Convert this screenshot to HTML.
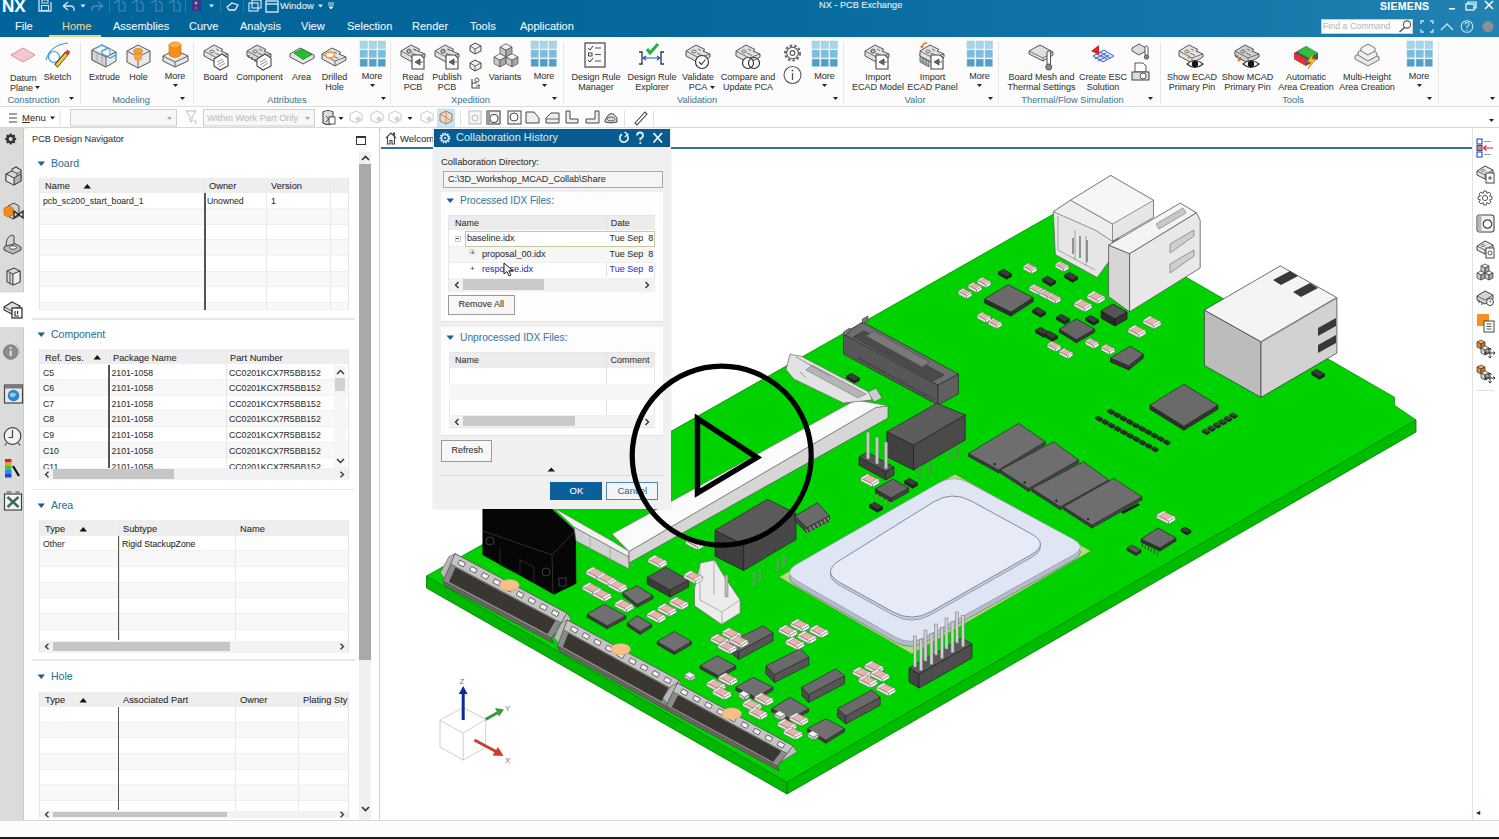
<!DOCTYPE html><html><head><meta charset="utf-8"><style>
*{margin:0;padding:0;box-sizing:border-box}
html,body{width:1499px;height:839px;overflow:hidden;background:#fff;font-family:"Liberation Sans",sans-serif}
.t{position:absolute;white-space:nowrap;line-height:1;-webkit-text-stroke:0.08px currentColor}
.b{position:absolute}
svg{position:absolute;left:0;top:0}
</style></head><body>

<div class="b" style="left:0;top:0;width:1499px;height:37px;background:linear-gradient(90deg,#00649a 0%,#05689b 45%,#1477a9 80%,#2283b3 100%)"></div>
<div class="t" style="left:2px;top:-2px;font-size:17px;color:#fff;font-weight:bold;">NX</div>
<div class="t" style="left:819px;top:0.5px;font-size:9.2px;color:#e8f0f6;font-weight:normal;">NX - PCB Exchange</div>
<div class="t" style="left:1380px;top:1px;font-size:10.5px;color:#fff;font-weight:bold;letter-spacing:0.3px">SIEMENS</div>
<div class="t" style="left:15px;top:21px;font-size:11px;color:#f2f6fa;font-weight:normal;">File</div>
<div class="t" style="left:62px;top:21px;font-size:11px;color:#e8d68a;font-weight:normal;">Home</div>
<div class="t" style="left:113px;top:21px;font-size:11px;color:#f2f6fa;font-weight:normal;">Assemblies</div>
<div class="t" style="left:189px;top:21px;font-size:11px;color:#f2f6fa;font-weight:normal;">Curve</div>
<div class="t" style="left:240px;top:21px;font-size:11px;color:#f2f6fa;font-weight:normal;">Analysis</div>
<div class="t" style="left:301px;top:21px;font-size:11px;color:#f2f6fa;font-weight:normal;">View</div>
<div class="t" style="left:347px;top:21px;font-size:11px;color:#f2f6fa;font-weight:normal;">Selection</div>
<div class="t" style="left:412px;top:21px;font-size:11px;color:#f2f6fa;font-weight:normal;">Render</div>
<div class="t" style="left:470px;top:21px;font-size:11px;color:#f2f6fa;font-weight:normal;">Tools</div>
<div class="t" style="left:520px;top:21px;font-size:11px;color:#f2f6fa;font-weight:normal;">Application</div>
<div class="b" style="left:49px;top:35px;width:52px;height:2.5px;background:#e9d27a"></div>
<div class="b" style="left:1321px;top:19px;width:92px;height:15px;background:#fff;border:1px solid #ccc"></div>
<div class="t" style="left:1323px;top:21.5px;font-size:8.8px;color:#b8b8b8;font-weight:normal;">Find a Command</div>
<div class="b" style="left:0px;top:37px;width:1499px;height:70px;background:#fcfcfc"></div>
<div class="b" style="left:0px;top:106px;width:1499px;height:1px;background:#dcdcdc"></div>
<div class="b" style="left:0px;top:107px;width:1499px;height:21px;background:#fff"></div>
<div class="b" style="left:0px;top:127px;width:1499px;height:1.5px;background:#d8d8d8"></div>
<svg width="1499" height="110" style="left:0;top:0"><path d="M11 55 L23 48 L35 55 L23 62 Z" fill="#f4c8d2" stroke="#e38aa0" stroke-width="1"/><path d="M46 60 Q50 45 68 43" fill="none" stroke="#3a9ad0" stroke-width="1.2"/><circle cx="54" cy="57" r="5.5" fill="none" stroke="#3a9ad0" stroke-width="1.2"/><path d="M56 66 L67 53" stroke="#333" stroke-width="4.5"/><path d="M56.5 65.5 L67 53.5" stroke="#f0c830" stroke-width="3"/><path d="M66 54 L69 51" stroke="#d04040" stroke-width="4"/><g transform="translate(91,43) scale(1.0)"><path d="M1 7 L11 2 L25 9 L25 18 L15 24 L1 17 Z" fill="#e8e8e8" stroke="#5a5a5a" stroke-width="1"/><path d="M1 7 L11 2 L17 5 L11 8 L11 11 L19 15 L25 12 L25 9" fill="#fafafa" stroke="#4aa8d8" stroke-width="1.4"/><path d="M19 6 L25 9 L19 12 Z" fill="#f4f4f4" stroke="#4aa8d8" stroke-width="1"/><path d="M1 7 L1 17 L15 24 L15 14 Z" fill="#d4d4d4" stroke="#5a5a5a" stroke-width="0.9"/><path d="M15 14 L25 9" stroke="#5a5a5a" stroke-width="0.9"/><path d="M6 10 L6 20 M11 12 L11 22" stroke="#9a9a9a" stroke-width="0.7"/></g><g transform="translate(126,43) scale(1.0)"><path d="M1 8 L12 2 L24 8 L24 19 L12 25 L1 19 Z" fill="#e8e8e8" stroke="#555" stroke-width="1"/><path d="M1 8 L12 14 L24 8 M12 14 L12 25" fill="none" stroke="#555" stroke-width="0.9"/><path d="M8 8 L8 16 Q12 20 16 16 L16 8 Z" fill="#f0a050"/><ellipse cx="12" cy="8" rx="4.5" ry="2.5" fill="#f8a030" stroke="#d07010" stroke-width="0.6"/></g><g transform="translate(162,41) scale(1.0)"><path d="M1 15 L13 9 L26 15 L26 20 L13 26 L1 20 Z" fill="#e6e6e6" stroke="#555" stroke-width="1"/><path d="M1 15 L13 21 L26 15 M13 21 L13 26" fill="none" stroke="#555" stroke-width="0.9"/><path d="M7 4 L7 14 Q13 19 19 14 L19 4 Z" fill="#f5901a" stroke="#d07010" stroke-width="0.6"/><ellipse cx="13" cy="4" rx="6" ry="3" fill="#fbb040" stroke="#d07010" stroke-width="0.6"/></g><g transform="translate(203,42) scale(1.0)"><path d="M1 9 L11 3 L20 7.5 L18 9 L25 12 L25 15 L14 21 L1 14 Z" fill="#e4e4e4" stroke="#555" stroke-width="1"/><path d="M1 9 L14 16 L25 12 M14 16 L14 21" fill="none" stroke="#555" stroke-width="0.8"/><ellipse cx="9" cy="9.5" rx="2.2" ry="1.4" fill="none" stroke="#555" stroke-width="0.8"/><path d="M13 7 L16 8.5 M12 11 L17 13.5" stroke="#555" stroke-width="0.8"/><path d="M11 17 L19 12 L25 16 L25 24 L17 28 L11 24 Z" fill="#fff" stroke="#444" stroke-width="1.1"/><path d="M14 20 L20 17 M14 23 L21 19 M16 25 L22 21" stroke="#777" stroke-width="0.8"/></g><g transform="translate(246,42) scale(1.0)"><path d="M1 9 L11 3 L20 7.5 L18 9 L25 12 L25 15 L14 21 L1 14 Z" fill="#d8d8d8" stroke="#555" stroke-width="1"/><path d="M1 9 L14 16 L25 12 M14 16 L14 21" fill="none" stroke="#555" stroke-width="0.8"/><ellipse cx="9" cy="9.5" rx="2.2" ry="1.4" fill="none" stroke="#555" stroke-width="0.8"/><path d="M13 7 L16 8.5 M12 11 L17 13.5" stroke="#555" stroke-width="0.8"/><path d="M3 13 L3 16 M6 15 L6 18 M9 17 L9 20" stroke="#444" stroke-width="1"/><path d="M11 17 L19 12 L25 16 L25 24 L17 28 L11 24 Z" fill="#fff" stroke="#444" stroke-width="1.1"/><path d="M14 20 L20 17 M14 23 L21 19 M16 25 L22 21" stroke="#777" stroke-width="0.8"/></g><g transform="translate(289,45) scale(1.0)"><path d="M1 9 L11 3 L25 10 L25 13 L14 19 L1 12 Z" fill="#e4e4e4" stroke="#555" stroke-width="1"/><path d="M5 8 L13 4 L23 9.5 L14 14.5 Z" fill="#22c030" stroke="#1a8020" stroke-width="0.8"/></g><g transform="translate(321,45) scale(1.0)"><path d="M1 9 L11 3 L20 7.5 L18 9 L25 12 L25 15 L14 21 L1 14 Z" fill="#e4e4e4" stroke="#555" stroke-width="1"/><path d="M1 9 L14 16 L25 12 M14 16 L14 21" fill="none" stroke="#555" stroke-width="0.8"/><ellipse cx="9" cy="9.5" rx="2.2" ry="1.4" fill="none" stroke="#555" stroke-width="0.8"/><path d="M13 7 L16 8.5 M12 11 L17 13.5" stroke="#555" stroke-width="0.8"/><ellipse cx="9" cy="10" rx="4.5" ry="2.8" fill="#fff" stroke="#f0a040" stroke-width="1.8"/></g><g transform="translate(360,41) scale(1.0)"><rect x="0" y="0" width="7.5" height="7.5" fill="#a8d4e8" stroke="#9cc9de" stroke-width="0.5"/><rect x="9" y="0" width="7.5" height="7.5" fill="#a8d4e8" stroke="#9cc9de" stroke-width="0.5"/><rect x="18" y="0" width="7.5" height="7.5" fill="#a8d4e8" stroke="#9cc9de" stroke-width="0.5"/><rect x="0" y="9" width="7.5" height="7.5" fill="#7cbddc" stroke="#9cc9de" stroke-width="0.5"/><rect x="9" y="9" width="7.5" height="7.5" fill="#7cbddc" stroke="#9cc9de" stroke-width="0.5"/><rect x="18" y="9" width="7.5" height="7.5" fill="#7cbddc" stroke="#9cc9de" stroke-width="0.5"/><rect x="0" y="18" width="7.5" height="7.5" fill="#4f9fc9" stroke="#9cc9de" stroke-width="0.5"/><rect x="9" y="18" width="7.5" height="7.5" fill="#4f9fc9" stroke="#9cc9de" stroke-width="0.5"/><rect x="18" y="18" width="7.5" height="7.5" fill="#4f9fc9" stroke="#9cc9de" stroke-width="0.5"/></g><g transform="translate(531,41) scale(1.0)"><rect x="0" y="0" width="7.5" height="7.5" fill="#a8d4e8" stroke="#9cc9de" stroke-width="0.5"/><rect x="9" y="0" width="7.5" height="7.5" fill="#a8d4e8" stroke="#9cc9de" stroke-width="0.5"/><rect x="18" y="0" width="7.5" height="7.5" fill="#a8d4e8" stroke="#9cc9de" stroke-width="0.5"/><rect x="0" y="9" width="7.5" height="7.5" fill="#7cbddc" stroke="#9cc9de" stroke-width="0.5"/><rect x="9" y="9" width="7.5" height="7.5" fill="#7cbddc" stroke="#9cc9de" stroke-width="0.5"/><rect x="18" y="9" width="7.5" height="7.5" fill="#7cbddc" stroke="#9cc9de" stroke-width="0.5"/><rect x="0" y="18" width="7.5" height="7.5" fill="#4f9fc9" stroke="#9cc9de" stroke-width="0.5"/><rect x="9" y="18" width="7.5" height="7.5" fill="#4f9fc9" stroke="#9cc9de" stroke-width="0.5"/><rect x="18" y="18" width="7.5" height="7.5" fill="#4f9fc9" stroke="#9cc9de" stroke-width="0.5"/></g><g transform="translate(812,41) scale(1.0)"><rect x="0" y="0" width="7.5" height="7.5" fill="#a8d4e8" stroke="#9cc9de" stroke-width="0.5"/><rect x="9" y="0" width="7.5" height="7.5" fill="#a8d4e8" stroke="#9cc9de" stroke-width="0.5"/><rect x="18" y="0" width="7.5" height="7.5" fill="#a8d4e8" stroke="#9cc9de" stroke-width="0.5"/><rect x="0" y="9" width="7.5" height="7.5" fill="#7cbddc" stroke="#9cc9de" stroke-width="0.5"/><rect x="9" y="9" width="7.5" height="7.5" fill="#7cbddc" stroke="#9cc9de" stroke-width="0.5"/><rect x="18" y="9" width="7.5" height="7.5" fill="#7cbddc" stroke="#9cc9de" stroke-width="0.5"/><rect x="0" y="18" width="7.5" height="7.5" fill="#4f9fc9" stroke="#9cc9de" stroke-width="0.5"/><rect x="9" y="18" width="7.5" height="7.5" fill="#4f9fc9" stroke="#9cc9de" stroke-width="0.5"/><rect x="18" y="18" width="7.5" height="7.5" fill="#4f9fc9" stroke="#9cc9de" stroke-width="0.5"/></g><g transform="translate(967,41) scale(1.0)"><rect x="0" y="0" width="7.5" height="7.5" fill="#a8d4e8" stroke="#9cc9de" stroke-width="0.5"/><rect x="9" y="0" width="7.5" height="7.5" fill="#a8d4e8" stroke="#9cc9de" stroke-width="0.5"/><rect x="18" y="0" width="7.5" height="7.5" fill="#a8d4e8" stroke="#9cc9de" stroke-width="0.5"/><rect x="0" y="9" width="7.5" height="7.5" fill="#7cbddc" stroke="#9cc9de" stroke-width="0.5"/><rect x="9" y="9" width="7.5" height="7.5" fill="#7cbddc" stroke="#9cc9de" stroke-width="0.5"/><rect x="18" y="9" width="7.5" height="7.5" fill="#7cbddc" stroke="#9cc9de" stroke-width="0.5"/><rect x="0" y="18" width="7.5" height="7.5" fill="#4f9fc9" stroke="#9cc9de" stroke-width="0.5"/><rect x="9" y="18" width="7.5" height="7.5" fill="#4f9fc9" stroke="#9cc9de" stroke-width="0.5"/><rect x="18" y="18" width="7.5" height="7.5" fill="#4f9fc9" stroke="#9cc9de" stroke-width="0.5"/></g><g transform="translate(1407,41) scale(1.0)"><rect x="0" y="0" width="7.5" height="7.5" fill="#a8d4e8" stroke="#9cc9de" stroke-width="0.5"/><rect x="9" y="0" width="7.5" height="7.5" fill="#a8d4e8" stroke="#9cc9de" stroke-width="0.5"/><rect x="18" y="0" width="7.5" height="7.5" fill="#a8d4e8" stroke="#9cc9de" stroke-width="0.5"/><rect x="0" y="9" width="7.5" height="7.5" fill="#7cbddc" stroke="#9cc9de" stroke-width="0.5"/><rect x="9" y="9" width="7.5" height="7.5" fill="#7cbddc" stroke="#9cc9de" stroke-width="0.5"/><rect x="18" y="9" width="7.5" height="7.5" fill="#7cbddc" stroke="#9cc9de" stroke-width="0.5"/><rect x="0" y="18" width="7.5" height="7.5" fill="#4f9fc9" stroke="#9cc9de" stroke-width="0.5"/><rect x="9" y="18" width="7.5" height="7.5" fill="#4f9fc9" stroke="#9cc9de" stroke-width="0.5"/><rect x="18" y="18" width="7.5" height="7.5" fill="#4f9fc9" stroke="#9cc9de" stroke-width="0.5"/></g><g transform="translate(400,42) scale(1.0)"><path d="M1 9 L11 3 L20 7.5 L18 9 L25 12 L25 15 L14 21 L1 14 Z" fill="#e0e0e0" stroke="#555" stroke-width="1"/><path d="M1 9 L14 16 L25 12 M14 16 L14 21" fill="none" stroke="#555" stroke-width="0.8"/><ellipse cx="9" cy="9.5" rx="2.2" ry="1.4" fill="none" stroke="#555" stroke-width="0.8"/><path d="M13 7 L16 8.5 M12 11 L17 13.5" stroke="#555" stroke-width="0.8"/><circle cx="9" cy="9" r="2" fill="none" stroke="#555" stroke-width="0.8"/><path d="M14 7 L18 9" stroke="#555" stroke-width="0.8"/><path d="M12 13 L21 13 L24 16 L24 27 L12 27 Z" fill="#fff" stroke="#444" stroke-width="1.1"/><path d="M15 20 L20 17 L20 23 Z M20 20 L23 20" fill="#666" stroke="#444" stroke-width="0.8"/></g><g transform="translate(434,42) scale(1.0)"><path d="M1 9 L11 3 L20 7.5 L18 9 L25 12 L25 15 L14 21 L1 14 Z" fill="#e0e0e0" stroke="#555" stroke-width="1"/><path d="M1 9 L14 16 L25 12 M14 16 L14 21" fill="none" stroke="#555" stroke-width="0.8"/><ellipse cx="9" cy="9.5" rx="2.2" ry="1.4" fill="none" stroke="#555" stroke-width="0.8"/><path d="M13 7 L16 8.5 M12 11 L17 13.5" stroke="#555" stroke-width="0.8"/><circle cx="9" cy="9" r="2" fill="none" stroke="#555" stroke-width="0.8"/><path d="M14 7 L18 9" stroke="#555" stroke-width="0.8"/><path d="M12 13 L21 13 L24 16 L24 27 L12 27 Z" fill="#fff" stroke="#444" stroke-width="1.1"/><path d="M15 20 L20 17 L20 23 Z M20 20 L23 20" fill="#666" stroke="#444" stroke-width="0.8"/></g><g transform="translate(468,42) scale(1.0)"><path d="M2 4 L7 1 L13 4 L13 9 L7 12 L2 9 Z" fill="#eee" stroke="#444" stroke-width="1"/><path d="M2 4 L7 7 L13 4 M7 7 L7 12" fill="none" stroke="#444" stroke-width="0.8"/></g><g transform="translate(468,59) scale(1.0)"><path d="M2 4 L7 1 L13 4 L13 9 L7 12 L2 9 Z" fill="#eee" stroke="#444" stroke-width="1"/><path d="M2 4 L7 7 L13 4 M7 7 L7 12" fill="none" stroke="#444" stroke-width="0.8"/></g><g transform="translate(468,77) scale(1.0)"><path d="M4 2 L4 11 L12 11 M4 6 L9 6" fill="none" stroke="#444" stroke-width="1.1"/><circle cx="9" cy="3" r="2" fill="none" stroke="#444" stroke-width="0.9"/><path d="M8 9 L12 9 L10 7" fill="none" stroke="#444" stroke-width="0.9"/></g><path d="M500 47 L506 43.7 L512 47 L506 50.3 Z" fill="#f2f2f2" stroke="#555" stroke-width="0.8"/><path d="M500 47 L500 53.6 L506 56.9 L506 50.3 Z" fill="#c8c8c8" stroke="#555" stroke-width="0.8"/><path d="M512 47 L512 53.6 L506 56.9 L506 50.3 Z" fill="#a8a8a8" stroke="#555" stroke-width="0.8"/><path d="M494 57 L500 53.7 L506 57 L500 60.3 Z" fill="#f2f2f2" stroke="#555" stroke-width="0.8"/><path d="M494 57 L494 63.6 L500 66.9 L500 60.3 Z" fill="#c8c8c8" stroke="#555" stroke-width="0.8"/><path d="M506 57 L506 63.6 L500 66.9 L500 60.3 Z" fill="#a8a8a8" stroke="#555" stroke-width="0.8"/><path d="M506 57 L512 53.7 L518 57 L512 60.3 Z" fill="#f2f2f2" stroke="#555" stroke-width="0.8"/><path d="M506 57 L506 63.6 L512 66.9 L512 60.3 Z" fill="#c8c8c8" stroke="#555" stroke-width="0.8"/><path d="M518 57 L518 63.6 L512 66.9 L512 60.3 Z" fill="#a8a8a8" stroke="#555" stroke-width="0.8"/><g transform="translate(584,42) scale(1.0)"><rect x="1" y="1" width="20" height="24" fill="#fafafa" stroke="#444" stroke-width="1.2"/><path d="M4 6 L6 8 L9 4 M4 18 L6 20 L9 16" fill="none" stroke="#333" stroke-width="1"/><rect x="4.5" y="11" width="3.5" height="3" fill="none" stroke="#333" stroke-width="0.9"/><path d="M11 6 L17 6 M11 12.5 L17 12.5 M11 19 L17 19" stroke="#555" stroke-width="1"/></g><g transform="translate(638,42) scale(1.0)"><path d="M1 10 L4 10 L4 22 L1 22 M26 10 L23 10 L23 22 L26 22" fill="none" stroke="#333" stroke-width="1.3"/><path d="M5 16 L22 16 M5 16 L8 14 M5 16 L8 18 M22 16 L19 14 M22 16 L19 18" fill="none" stroke="#2050c0" stroke-width="1.1"/><path d="M9 7 L12 11 L20 2" fill="none" stroke="#20b040" stroke-width="3"/></g><g transform="translate(685,42) scale(1.0)"><path d="M1 9 L11 3 L20 7.5 L18 9 L25 12 L25 15 L14 21 L1 14 Z" fill="#e0e0e0" stroke="#555" stroke-width="1"/><path d="M1 9 L14 16 L25 12 M14 16 L14 21" fill="none" stroke="#555" stroke-width="0.8"/><ellipse cx="9" cy="9.5" rx="2.2" ry="1.4" fill="none" stroke="#555" stroke-width="0.8"/><path d="M13 7 L16 8.5 M12 11 L17 13.5" stroke="#555" stroke-width="0.8"/><circle cx="17" cy="20" r="6.5" fill="#fff" stroke="#333" stroke-width="1.2"/><path d="M14 20 L16.5 22.5 L20.5 17.5" fill="none" stroke="#333" stroke-width="1.1"/></g><g transform="translate(735,42) scale(1.0)"><path d="M1 9 L11 3 L20 7.5 L18 9 L25 12 L25 15 L14 21 L1 14 Z" fill="#e0e0e0" stroke="#555" stroke-width="1"/><path d="M1 9 L14 16 L25 12 M14 16 L14 21" fill="none" stroke="#555" stroke-width="0.8"/><ellipse cx="9" cy="9.5" rx="2.2" ry="1.4" fill="none" stroke="#555" stroke-width="0.8"/><path d="M13 7 L16 8.5 M12 11 L17 13.5" stroke="#555" stroke-width="0.8"/><circle cx="13" cy="21" r="5.5" fill="#fff" stroke="#333" stroke-width="1.2"/><circle cx="19" cy="21" r="5.5" fill="none" stroke="#333" stroke-width="1.2"/></g><g transform="translate(792.5,53) scale(1.0)"><circle r="7.5" fill="none" stroke="#666" stroke-width="2" stroke-dasharray="2.6 2"/><circle r="5.8" fill="#fff" stroke="#555" stroke-width="1.1"/><circle r="2.4" fill="none" stroke="#555" stroke-width="1.1"/></g><circle cx="792.5" cy="75" r="8.5" fill="#fff" stroke="#555" stroke-width="1.1"/><path d="M792.5 73 L792.5 80" stroke="#555" stroke-width="1.3"/><circle cx="792.5" cy="70.5" r="0.9" fill="#555"/><g transform="translate(864,42) scale(1.0)"><path d="M1 9 L11 3 L20 7.5 L18 9 L25 12 L25 15 L14 21 L1 14 Z" fill="#e0e0e0" stroke="#555" stroke-width="1"/><path d="M1 9 L14 16 L25 12 M14 16 L14 21" fill="none" stroke="#555" stroke-width="0.8"/><ellipse cx="9" cy="9.5" rx="2.2" ry="1.4" fill="none" stroke="#555" stroke-width="0.8"/><path d="M13 7 L16 8.5 M12 11 L17 13.5" stroke="#555" stroke-width="0.8"/><circle cx="9" cy="9" r="2" fill="none" stroke="#555" stroke-width="0.8"/><path d="M12 13 L21 13 L24 16 L24 27 L12 27 Z" fill="#fff" stroke="#444" stroke-width="1.1"/><path d="M15 20 L20 17 L20 23 Z M20 20 L23 20" fill="#666" stroke="#444" stroke-width="0.8"/></g><g transform="translate(919,42) scale(1.0)"><path d="M1 12 L10 7 L10 25 L1 20 Z" fill="#c8c8c8" stroke="#555" stroke-width="0.8"/><path d="M1 15 L10 20 M1 18 L10 23 M4 10 L4 22 M7 9 L7 24" stroke="#555" stroke-width="0.6"/><path d="M1 9 L11 3 L20 7.5 L18 9 L25 12 L25 15 L14 21 L1 14 Z" fill="#e0e0e0" stroke="#555" stroke-width="1"/><path d="M1 9 L14 16 L25 12 M14 16 L14 21" fill="none" stroke="#555" stroke-width="0.8"/><ellipse cx="9" cy="9.5" rx="2.2" ry="1.4" fill="none" stroke="#555" stroke-width="0.8"/><path d="M13 7 L16 8.5 M12 11 L17 13.5" stroke="#555" stroke-width="0.8"/><path d="M12 13 L21 13 L24 16 L24 27 L12 27 Z" fill="#fff" stroke="#444" stroke-width="1.1"/><path d="M15 20 L20 17 L20 23 Z M20 20 L23 20" fill="#666" stroke="#444" stroke-width="0.8"/><path d="M3 6 Q3 1 8 1" fill="none" stroke="#f07020" stroke-width="1.4"/><path d="M1 4 L3 7 L5 4" fill="#f07020"/></g><g transform="translate(1028,42) scale(1.0)"><path d="M1 9 L12 3 L25 10 L25 13 L15 19 L1 12 Z" fill="#e0e0e0" stroke="#555" stroke-width="1"/><path d="M1 9 L15 16 L25 10 M15 16 L15 19" fill="none" stroke="#555" stroke-width="0.8"/><rect x="19" y="9" width="3.5" height="14" rx="1.7" fill="#fff" stroke="#555" stroke-width="1.1"/><circle cx="20.75" cy="25" r="3" fill="#888" stroke="#555" stroke-width="1"/></g><g transform="translate(1090,42) scale(1.0)"><path d="M3 14 L14 8 L24 14 L13 20 Z M5 17 L16 11 M8 19 L19 13 M7 12 L17 17 M10 10 L20 16" fill="#d8e4f8" stroke="#3050d0" stroke-width="0.9"/><path d="M1 9 L9 3 L9 13 Z" fill="#e02020"/></g><g transform="translate(1131,42) scale(1.0)"><path d="M1 6 L8 2 L15 6 L15 9 L8 13 L1 9 Z" fill="#ddd" stroke="#444" stroke-width="0.9"/><rect x="14" y="4" width="3" height="10" rx="1.5" fill="#fff" stroke="#444" stroke-width="0.9"/><circle cx="15.5" cy="15" r="2.2" fill="#888" stroke="#444" stroke-width="0.8"/></g><g transform="translate(1131,62) scale(1.0)"><path d="M4 1 L12 1 L15 4 L15 10 L4 10 Z" fill="#fff" stroke="#444" stroke-width="0.9"/><rect x="1" y="10" width="17" height="8" fill="#ddd" stroke="#444" stroke-width="1"/><circle cx="12" cy="14" r="3" fill="#fff" stroke="#444" stroke-width="0.9"/></g><g transform="translate(1178,42) scale(1.0)"><path d="M1 9 L11 3 L20 7.5 L18 9 L25 12 L25 15 L14 21 L1 14 Z" fill="#e2e2e2" stroke="#555" stroke-width="1"/><path d="M1 9 L14 16 L25 12 M14 16 L14 21" fill="none" stroke="#555" stroke-width="0.8"/><ellipse cx="9" cy="9.5" rx="2.2" ry="1.4" fill="none" stroke="#555" stroke-width="0.8"/><path d="M13 7 L16 8.5 M12 11 L17 13.5" stroke="#555" stroke-width="0.8"/><circle cx="11" cy="15" r="1.6" fill="#f08030"/><path d="M9 22 Q17 15 25 22 Q17 29 9 22 Z" fill="#fff" stroke="#333" stroke-width="1.2"/><circle cx="17" cy="22" r="3.2" fill="#111"/></g><g transform="translate(1234,42) scale(1.0)"><path d="M1 9 L11 3 L20 7.5 L18 9 L25 12 L25 15 L14 21 L1 14 Z" fill="#cfcfcf" stroke="#555" stroke-width="1"/><path d="M1 9 L14 16 L25 12 M14 16 L14 21" fill="none" stroke="#555" stroke-width="0.8"/><ellipse cx="9" cy="9.5" rx="2.2" ry="1.4" fill="none" stroke="#555" stroke-width="0.8"/><path d="M13 7 L16 8.5 M12 11 L17 13.5" stroke="#555" stroke-width="0.8"/><path d="M3 13 L3 16 M6 15 L6 18" stroke="#444" stroke-width="1"/><circle cx="5" cy="18" r="1.6" fill="#f08030"/><path d="M9 22 Q17 15 25 22 Q17 29 9 22 Z" fill="#fff" stroke="#333" stroke-width="1.2"/><circle cx="17" cy="22" r="3.2" fill="#111"/></g><g transform="translate(1293,42) scale(1.0)"><path d="M1 11 L13 4 L25 11 L25 17 L13 24 L1 17 Z" fill="#555"/><path d="M13 4 L25 11 L16 16 L5 10 Z" fill="#30c040"/><path d="M1 11 L13 17 L13 24 L1 17 Z" fill="#e83030"/><path d="M20 12 L14 20 L18 20 L15 27 L23 17 L19 17 Z" fill="#f8c020" stroke="#c08000" stroke-width="0.6"/></g><g transform="translate(1354,42) scale(1.0)"><path d="M1 14 L12 8 L25 15 L25 18 L14 24 L1 17 Z" fill="#e8e8e8" stroke="#666" stroke-width="0.9"/><path d="M4 10 L13 5 L23 11 L23 14 L14 19 L4 13 Z" fill="#efefef" stroke="#666" stroke-width="0.9"/><path d="M7 6 L14 2 L21 6 L21 9 L14 13 L7 9 Z" fill="#f4f4f4" stroke="#666" stroke-width="0.9"/></g></svg>
<div class="t" style="left:10px;top:74px;font-size:9px;color:#3a3a3a;font-weight:normal;">Datum</div>
<div class="t" style="left:10px;top:84px;font-size:9px;color:#3a3a3a;font-weight:normal;">Plane</div>
<svg style="left:35.0px;top:85.5px" width="5" height="3"><path d="M0 0 L5 0 L2.5 3 Z" fill="#222"/></svg>
<div class="t" style="left:-2.5px;top:72.0px;width:120px;text-align:center;font-size:9px;line-height:10px;color:#3a3a3a">Sketch</div>
<div class="t" style="left:44.5px;top:72.0px;width:120px;text-align:center;font-size:9px;line-height:10px;color:#3a3a3a">Extrude</div>
<div class="t" style="left:78.5px;top:72.0px;width:120px;text-align:center;font-size:9px;line-height:10px;color:#3a3a3a">Hole</div>
<div class="t" style="left:115px;top:71px;width:120px;text-align:center;font-size:9px;line-height:10px;color:#3a3a3a">More</div>
<svg style="left:172.5px;top:83.5px" width="5" height="3"><path d="M0 0 L5 0 L2.5 3 Z" fill="#222"/></svg>
<div class="t" style="left:155.5px;top:72.0px;width:120px;text-align:center;font-size:9px;line-height:10px;color:#3a3a3a">Board</div>
<div class="t" style="left:199.5px;top:72.0px;width:120px;text-align:center;font-size:9px;line-height:10px;color:#3a3a3a">Component</div>
<div class="t" style="left:241.5px;top:72.0px;width:120px;text-align:center;font-size:9px;line-height:10px;color:#3a3a3a">Area</div>
<div class="t" style="left:274.5px;top:72.0px;width:120px;text-align:center;font-size:9px;line-height:10px;color:#3a3a3a">Drilled<br>Hole</div>
<div class="t" style="left:312px;top:71px;width:120px;text-align:center;font-size:9px;line-height:10px;color:#3a3a3a">More</div>
<svg style="left:369.5px;top:83.5px" width="5" height="3"><path d="M0 0 L5 0 L2.5 3 Z" fill="#222"/></svg>
<div class="t" style="left:353px;top:72.0px;width:120px;text-align:center;font-size:9px;line-height:10px;color:#3a3a3a">Read<br>PCB</div>
<div class="t" style="left:387px;top:72.0px;width:120px;text-align:center;font-size:9px;line-height:10px;color:#3a3a3a">Publish<br>PCB</div>
<div class="t" style="left:445px;top:72.0px;width:120px;text-align:center;font-size:9px;line-height:10px;color:#3a3a3a">Variants</div>
<div class="t" style="left:484px;top:71px;width:120px;text-align:center;font-size:9px;line-height:10px;color:#3a3a3a">More</div>
<svg style="left:541.5px;top:83.5px" width="5" height="3"><path d="M0 0 L5 0 L2.5 3 Z" fill="#222"/></svg>
<div class="t" style="left:536px;top:72.0px;width:120px;text-align:center;font-size:9px;line-height:10px;color:#3a3a3a">Design Rule<br>Manager</div>
<div class="t" style="left:592px;top:72.0px;width:120px;text-align:center;font-size:9px;line-height:10px;color:#3a3a3a">Design Rule<br>Explorer</div>
<div class="t" style="left:638px;top:72.0px;width:120px;text-align:center;font-size:9px;line-height:10px;color:#3a3a3a">Validate<br>PCA</div>
<svg style="left:709.5px;top:85.5px" width="5" height="3"><path d="M0 0 L5 0 L2.5 3 Z" fill="#222"/></svg>
<div class="t" style="left:688px;top:72.0px;width:120px;text-align:center;font-size:9px;line-height:10px;color:#3a3a3a">Compare and<br>Update PCA</div>
<div class="t" style="left:764.5px;top:71px;width:120px;text-align:center;font-size:9px;line-height:10px;color:#3a3a3a">More</div>
<svg style="left:822.0px;top:83.5px" width="5" height="3"><path d="M0 0 L5 0 L2.5 3 Z" fill="#222"/></svg>
<div class="t" style="left:818px;top:72.0px;width:120px;text-align:center;font-size:9px;line-height:10px;color:#3a3a3a">Import<br>ECAD Model</div>
<div class="t" style="left:872.5px;top:72.0px;width:120px;text-align:center;font-size:9px;line-height:10px;color:#3a3a3a">Import<br>ECAD Panel</div>
<div class="t" style="left:919.5px;top:71px;width:120px;text-align:center;font-size:9px;line-height:10px;color:#3a3a3a">More</div>
<svg style="left:977.0px;top:83.5px" width="5" height="3"><path d="M0 0 L5 0 L2.5 3 Z" fill="#222"/></svg>
<div class="t" style="left:981.5px;top:72.0px;width:120px;text-align:center;font-size:9px;line-height:10px;color:#3a3a3a">Board Mesh and<br>Thermal Settings</div>
<div class="t" style="left:1043px;top:72.0px;width:120px;text-align:center;font-size:9px;line-height:10px;color:#3a3a3a">Create ESC<br>Solution</div>
<div class="t" style="left:1132px;top:72.0px;width:120px;text-align:center;font-size:9px;line-height:10px;color:#3a3a3a">Show ECAD<br>Primary Pin</div>
<div class="t" style="left:1187.5px;top:72.0px;width:120px;text-align:center;font-size:9px;line-height:10px;color:#3a3a3a">Show MCAD<br>Primary Pin</div>
<div class="t" style="left:1246px;top:72.0px;width:120px;text-align:center;font-size:9px;line-height:10px;color:#3a3a3a">Automatic<br>Area Creation</div>
<div class="t" style="left:1307px;top:72.0px;width:120px;text-align:center;font-size:9px;line-height:10px;color:#3a3a3a">Multi-Height<br>Area Creation</div>
<div class="t" style="left:1359px;top:71px;width:120px;text-align:center;font-size:9px;line-height:10px;color:#3a3a3a">More</div>
<svg style="left:1416.5px;top:83.5px" width="5" height="3"><path d="M0 0 L5 0 L2.5 3 Z" fill="#222"/></svg>
<div class="t" style="left:-26.5px;top:95.3px;width:120px;text-align:center;font-size:9.3px;line-height:10px;color:#477c9a">Construction</div>
<div class="t" style="left:71px;top:95.3px;width:120px;text-align:center;font-size:9.3px;line-height:10px;color:#477c9a">Modeling</div>
<div class="t" style="left:227px;top:95.3px;width:120px;text-align:center;font-size:9.3px;line-height:10px;color:#477c9a">Attributes</div>
<div class="t" style="left:410.5px;top:95.3px;width:120px;text-align:center;font-size:9.3px;line-height:10px;color:#477c9a">Xpedition</div>
<div class="t" style="left:637px;top:95.3px;width:120px;text-align:center;font-size:9.3px;line-height:10px;color:#477c9a">Validation</div>
<div class="t" style="left:855px;top:95.3px;width:120px;text-align:center;font-size:9.3px;line-height:10px;color:#477c9a">Valor</div>
<div class="t" style="left:1012.5px;top:95.3px;width:120px;text-align:center;font-size:9.3px;line-height:10px;color:#477c9a">Thermal/Flow Simulation</div>
<div class="t" style="left:1233px;top:95.3px;width:120px;text-align:center;font-size:9.3px;line-height:10px;color:#477c9a">Tools</div>
<svg style="left:68.5px;top:97.0px" width="5" height="3"><path d="M0 0 L5 0 L2.5 3 Z" fill="#222"/></svg>
<svg style="left:179.5px;top:97.0px" width="5" height="3"><path d="M0 0 L5 0 L2.5 3 Z" fill="#222"/></svg>
<svg style="left:380.5px;top:97.0px" width="5" height="3"><path d="M0 0 L5 0 L2.5 3 Z" fill="#222"/></svg>
<svg style="left:551.5px;top:97.0px" width="5" height="3"><path d="M0 0 L5 0 L2.5 3 Z" fill="#222"/></svg>
<svg style="left:832.5px;top:97.0px" width="5" height="3"><path d="M0 0 L5 0 L2.5 3 Z" fill="#222"/></svg>
<svg style="left:987.5px;top:97.0px" width="5" height="3"><path d="M0 0 L5 0 L2.5 3 Z" fill="#222"/></svg>
<svg style="left:1147.5px;top:97.0px" width="5" height="3"><path d="M0 0 L5 0 L2.5 3 Z" fill="#222"/></svg>
<svg style="left:1426.5px;top:97.0px" width="5" height="3"><path d="M0 0 L5 0 L2.5 3 Z" fill="#222"/></svg>
<svg style="left:1489.5px;top:97.0px" width="5" height="3"><path d="M0 0 L5 0 L2.5 3 Z" fill="#222"/></svg>
<div class="b" style="left:80px;top:42px;width:1px;height:62px;background:#e6e6e6"></div>
<div class="b" style="left:193px;top:42px;width:1px;height:62px;background:#e6e6e6"></div>
<div class="b" style="left:390px;top:42px;width:1px;height:62px;background:#e6e6e6"></div>
<div class="b" style="left:563px;top:42px;width:1px;height:62px;background:#e6e6e6"></div>
<div class="b" style="left:843px;top:42px;width:1px;height:62px;background:#e6e6e6"></div>
<div class="b" style="left:998px;top:42px;width:1px;height:62px;background:#e6e6e6"></div>
<div class="b" style="left:1160px;top:42px;width:1px;height:62px;background:#e6e6e6"></div>
<div class="b" style="left:1438px;top:42px;width:1px;height:62px;background:#e6e6e6"></div>
<div class="b" style="left:0px;top:128px;width:23px;height:693px;background:#dadcda"></div>
<div class="b" style="left:23px;top:128px;width:1.2px;height:693px;background:#c8cac8"></div>
<div class="b" style="left:25px;top:128px;width:354px;height:693px;background:#fff"></div>
<div class="b" style="left:378.6px;top:128px;width:1.5px;height:693px;background:#cfcfcf"></div>
<div class="t" style="left:32px;top:135px;font-size:9.2px;color:#3a3a3a;font-weight:normal;">PCB Design Navigator</div>
<div class="b" style="left:356px;top:136px;width:10px;height:9px;border:1.3px solid #333;border-top-width:2.5px"></div>
<div class="b" style="left:359px;top:152px;width:12px;height:668px;background:#f0f0f0"></div>
<div class="b" style="left:359px;top:164px;width:12px;height:496px;background:#a9a9a9"></div>
<svg style="left:361px;top:155px" width="9" height="6"><path d="M1 5 L4.5 1.5 L8 5" fill="none" stroke="#333" stroke-width="1.6"/></svg>
<svg style="left:360.5px;top:806px" width="9" height="6"><path d="M1 1 L4.5 4.5 L8 1" fill="none" stroke="#333" stroke-width="1.6"/></svg>
<svg style="left:37px;top:160.5px" width="9" height="6"><path d="M0.5 0.5 L8 0.5 L4.25 5 Z" fill="#1f5f8b"/></svg>
<div class="t" style="left:51px;top:157.5px;font-size:10.5px;color:#2d7296;font-weight:normal;">Board</div>
<div class="b" style="left:32px;top:318px;width:323px;height:1.5px;background:#e8e8e8"></div>
<div class="b" style="left:39px;top:177.6px;width:310px;height:132.4px;background:#fff;border:1px solid #e4e4e4"></div>
<div class="b" style="left:40px;top:177.6px;width:308px;height:15.599999999999994px;background:#eeeeee"></div>
<div class="b" style="left:40px;top:207.89999999999998px;width:308px;height:1px;background:#f1f1f1"></div>
<div class="b" style="left:40px;top:208.89999999999998px;width:308px;height:15.7px;background:#f8f8f8"></div>
<div class="b" style="left:40px;top:223.59999999999997px;width:308px;height:1px;background:#f1f1f1"></div>
<div class="b" style="left:40px;top:239.29999999999995px;width:308px;height:1px;background:#f1f1f1"></div>
<div class="b" style="left:40px;top:240.29999999999995px;width:308px;height:15.7px;background:#f8f8f8"></div>
<div class="b" style="left:40px;top:254.99999999999994px;width:308px;height:1px;background:#f1f1f1"></div>
<div class="b" style="left:40px;top:270.69999999999993px;width:308px;height:1px;background:#f1f1f1"></div>
<div class="b" style="left:40px;top:271.69999999999993px;width:308px;height:15.7px;background:#f8f8f8"></div>
<div class="b" style="left:40px;top:286.3999999999999px;width:308px;height:1px;background:#f1f1f1"></div>
<div class="b" style="left:40px;top:302.0999999999999px;width:308px;height:1px;background:#f1f1f1"></div>
<div class="b" style="left:40px;top:303.0999999999999px;width:308px;height:6.900000000000091px;background:#f8f8f8"></div>
<div class="b" style="left:40px;top:309.0px;width:308px;height:1px;background:#f1f1f1"></div>
<div class="b" style="left:204px;top:178.6px;width:1px;height:131.4px;background:#e8e8e8"></div>
<div class="b" style="left:266px;top:178.6px;width:1px;height:131.4px;background:#e8e8e8"></div>
<div class="b" style="left:329.5px;top:178.6px;width:1px;height:131.4px;background:#e8e8e8"></div>
<div class="t" style="left:45px;top:182.2px;font-size:9.3px;color:#2a2a2a;font-weight:normal;">Name</div>
<svg style="left:83px;top:182.89999999999998px" width="9" height="6"><path d="M0.5 5.5 L8 5.5 L4.25 1 Z" fill="#111"/></svg>
<div class="t" style="left:209px;top:182.2px;font-size:9.3px;color:#2a2a2a;font-weight:normal;">Owner</div>
<div class="t" style="left:271px;top:182.2px;font-size:9.3px;color:#2a2a2a;font-weight:normal;">Version</div>
<div class="t" style="left:43px;top:197.24999999999997px;font-size:8.7px;color:#333;font-weight:normal;">pcb_sc200_start_board_1</div>
<div class="t" style="left:207px;top:197.24999999999997px;font-size:8.7px;color:#333;font-weight:normal;">Unowned</div>
<div class="t" style="left:271px;top:197.24999999999997px;font-size:8.7px;color:#2a2a2a;font-weight:normal;">1</div>
<div class="b" style="left:204px;top:193.2px;width:1.8px;height:116.80000000000001px;background:#555"></div>
<svg style="left:37px;top:331.6px" width="9" height="6"><path d="M0.5 0.5 L8 0.5 L4.25 5 Z" fill="#1f5f8b"/></svg>
<div class="t" style="left:51px;top:328.6px;font-size:10.5px;color:#2d7296;font-weight:normal;">Component</div>
<div class="b" style="left:32px;top:488.7px;width:323px;height:1.5px;background:#e8e8e8"></div>
<div class="b" style="left:39px;top:349.3px;width:310px;height:130.7px;background:#fff;border:1px solid #e4e4e4"></div>
<div class="b" style="left:40px;top:349.3px;width:308px;height:15.199999999999989px;background:#eeeeee"></div>
<div class="b" style="left:40px;top:379.1px;width:308px;height:1px;background:#f1f1f1"></div>
<div class="b" style="left:40px;top:380.1px;width:308px;height:15.6px;background:#f8f8f8"></div>
<div class="b" style="left:40px;top:394.70000000000005px;width:308px;height:1px;background:#f1f1f1"></div>
<div class="b" style="left:40px;top:410.30000000000007px;width:308px;height:1px;background:#f1f1f1"></div>
<div class="b" style="left:40px;top:411.30000000000007px;width:308px;height:15.6px;background:#f8f8f8"></div>
<div class="b" style="left:40px;top:425.9000000000001px;width:308px;height:1px;background:#f1f1f1"></div>
<div class="b" style="left:40px;top:441.5000000000001px;width:308px;height:1px;background:#f1f1f1"></div>
<div class="b" style="left:40px;top:442.5000000000001px;width:308px;height:15.6px;background:#f8f8f8"></div>
<div class="b" style="left:40px;top:457.10000000000014px;width:308px;height:1px;background:#f1f1f1"></div>
<div class="b" style="left:40px;top:472.70000000000016px;width:308px;height:1px;background:#f1f1f1"></div>
<div class="b" style="left:40px;top:473.70000000000016px;width:308px;height:6.299999999999841px;background:#f8f8f8"></div>
<div class="b" style="left:40px;top:479.0px;width:308px;height:1px;background:#f1f1f1"></div>
<div class="b" style="left:109px;top:350.3px;width:1px;height:129.7px;background:#e8e8e8"></div>
<div class="b" style="left:225.6px;top:350.3px;width:1px;height:129.7px;background:#e8e8e8"></div>
<div class="t" style="left:45px;top:353.7px;font-size:9.3px;color:#2a2a2a;font-weight:normal;">Ref. Des.</div>
<svg style="left:93px;top:354.4px" width="9" height="6"><path d="M0.5 5.5 L8 5.5 L4.25 1 Z" fill="#111"/></svg>
<div class="t" style="left:113px;top:353.7px;font-size:9.3px;color:#2a2a2a;font-weight:normal;">Package Name</div>
<div class="t" style="left:230px;top:353.7px;font-size:9.3px;color:#2a2a2a;font-weight:normal;">Part Number</div>
<div class="t" style="left:43px;top:368.5px;font-size:8.7px;color:#333;font-weight:normal;">C5</div>
<div class="t" style="left:111.5px;top:368.5px;font-size:8.7px;color:#333;font-weight:normal;">2101-1058</div>
<div class="t" style="left:229px;top:368.5px;font-size:8.7px;color:#333;font-weight:normal;">CC0201KCX7R5BB152</div>
<div class="t" style="left:43px;top:384.1px;font-size:8.7px;color:#333;font-weight:normal;">C6</div>
<div class="t" style="left:111.5px;top:384.1px;font-size:8.7px;color:#333;font-weight:normal;">2101-1058</div>
<div class="t" style="left:229px;top:384.1px;font-size:8.7px;color:#333;font-weight:normal;">CC0201KCX7R5BB152</div>
<div class="t" style="left:43px;top:399.7px;font-size:8.7px;color:#333;font-weight:normal;">C7</div>
<div class="t" style="left:111.5px;top:399.7px;font-size:8.7px;color:#333;font-weight:normal;">2101-1058</div>
<div class="t" style="left:229px;top:399.7px;font-size:8.7px;color:#333;font-weight:normal;">CC0201KCX7R5BB152</div>
<div class="t" style="left:43px;top:415.3px;font-size:8.7px;color:#333;font-weight:normal;">C8</div>
<div class="t" style="left:111.5px;top:415.3px;font-size:8.7px;color:#333;font-weight:normal;">2101-1058</div>
<div class="t" style="left:229px;top:415.3px;font-size:8.7px;color:#333;font-weight:normal;">CC0201KCX7R5BB152</div>
<div class="t" style="left:43px;top:430.9px;font-size:8.7px;color:#333;font-weight:normal;">C9</div>
<div class="t" style="left:111.5px;top:430.9px;font-size:8.7px;color:#333;font-weight:normal;">2101-1058</div>
<div class="t" style="left:229px;top:430.9px;font-size:8.7px;color:#333;font-weight:normal;">CC0201KCX7R5BB152</div>
<div class="t" style="left:43px;top:446.5px;font-size:8.7px;color:#333;font-weight:normal;">C10</div>
<div class="t" style="left:111.5px;top:446.5px;font-size:8.7px;color:#333;font-weight:normal;">2101-1058</div>
<div class="t" style="left:229px;top:446.5px;font-size:8.7px;color:#333;font-weight:normal;">CC0201KCX7R5BB152</div>
<div class="b" style="left:108px;top:364.5px;width:1.8px;height:103.5px;background:#555"></div>
<div class="b" style="left:40px;top:468.4px;width:308px;height:11.5px;background:#f2f2f2"></div>
<div class="b" style="left:53px;top:469.4px;width:121px;height:9.5px;background:#c6c6c6"></div>
<svg style="left:44px;top:470.65px" width="6" height="7"><path d="M4.5 0.8 L1.5 3.5 L4.5 6.2" fill="none" stroke="#333" stroke-width="1.3"/></svg>
<svg style="left:339px;top:470.65px" width="6" height="7"><path d="M1.5 0.8 L4.5 3.5 L1.5 6.2" fill="none" stroke="#333" stroke-width="1.3"/></svg>
<div class="t" style="left:43px;top:462.5px;font-size:8.7px;color:#333;font-weight:normal;height:6px;overflow:hidden">C11</div>
<div class="t" style="left:111.5px;top:462.5px;font-size:8.7px;color:#333;font-weight:normal;height:6px;overflow:hidden">2101-1058</div>
<div class="t" style="left:229px;top:462.5px;font-size:8.7px;color:#333;font-weight:normal;height:6px;overflow:hidden">CC0201KCX7R5BB152</div>
<div class="b" style="left:334px;top:365px;width:12px;height:103px;background:#f6f6f6"></div>
<div class="b" style="left:335px;top:378px;width:10px;height:13px;background:#d0d0d0"></div>
<svg style="left:336px;top:369px" width="9" height="6"><path d="M1 5 L4.5 1.5 L8 5" fill="none" stroke="#333" stroke-width="1.4"/></svg>
<svg style="left:336px;top:458px" width="9" height="6"><path d="M1 1 L4.5 4.5 L8 1" fill="none" stroke="#333" stroke-width="1.4"/></svg>
<svg style="left:37px;top:502.7px" width="9" height="6"><path d="M0.5 0.5 L8 0.5 L4.25 5 Z" fill="#1f5f8b"/></svg>
<div class="t" style="left:51px;top:499.7px;font-size:10.5px;color:#2d7296;font-weight:normal;">Area</div>
<div class="b" style="left:32px;top:659.3px;width:323px;height:1.5px;background:#e8e8e8"></div>
<div class="b" style="left:39px;top:520.4px;width:310px;height:132.10000000000002px;background:#fff;border:1px solid #e4e4e4"></div>
<div class="b" style="left:40px;top:520.4px;width:308px;height:15.200000000000045px;background:#eeeeee"></div>
<div class="b" style="left:40px;top:550.3000000000001px;width:308px;height:1px;background:#f1f1f1"></div>
<div class="b" style="left:40px;top:551.3000000000001px;width:308px;height:15.7px;background:#f8f8f8"></div>
<div class="b" style="left:40px;top:566.0000000000001px;width:308px;height:1px;background:#f1f1f1"></div>
<div class="b" style="left:40px;top:581.7000000000002px;width:308px;height:1px;background:#f1f1f1"></div>
<div class="b" style="left:40px;top:582.7000000000002px;width:308px;height:15.7px;background:#f8f8f8"></div>
<div class="b" style="left:40px;top:597.4000000000002px;width:308px;height:1px;background:#f1f1f1"></div>
<div class="b" style="left:40px;top:613.1000000000003px;width:308px;height:1px;background:#f1f1f1"></div>
<div class="b" style="left:40px;top:614.1000000000003px;width:308px;height:15.7px;background:#f8f8f8"></div>
<div class="b" style="left:40px;top:628.8000000000003px;width:308px;height:1px;background:#f1f1f1"></div>
<div class="b" style="left:40px;top:644.5000000000003px;width:308px;height:1px;background:#f1f1f1"></div>
<div class="b" style="left:40px;top:645.5000000000003px;width:308px;height:6.999999999999659px;background:#f8f8f8"></div>
<div class="b" style="left:40px;top:651.5px;width:308px;height:1px;background:#f1f1f1"></div>
<div class="b" style="left:118.6px;top:521.4px;width:1px;height:131.10000000000002px;background:#e8e8e8"></div>
<div class="b" style="left:235.2px;top:521.4px;width:1px;height:131.10000000000002px;background:#e8e8e8"></div>
<div class="t" style="left:45px;top:524.8px;font-size:9.3px;color:#2a2a2a;font-weight:normal;">Type</div>
<svg style="left:79px;top:525.5px" width="9" height="6"><path d="M0.5 5.5 L8 5.5 L4.25 1 Z" fill="#111"/></svg>
<div class="t" style="left:123px;top:524.8px;font-size:9.3px;color:#2a2a2a;font-weight:normal;">Subtype</div>
<div class="t" style="left:240px;top:524.8px;font-size:9.3px;color:#2a2a2a;font-weight:normal;">Name</div>
<div class="t" style="left:43px;top:539.6500000000001px;font-size:8.7px;color:#333;font-weight:normal;">Other</div>
<div class="t" style="left:122px;top:539.6500000000001px;font-size:8.7px;color:#2a2a2a;font-weight:normal;">Rigid StackupZone</div>
<div class="b" style="left:117.5px;top:535.6px;width:1.8px;height:104.0px;background:#555"></div>
<div class="b" style="left:40px;top:640.8px;width:308px;height:11.5px;background:#f2f2f2"></div>
<div class="b" style="left:53px;top:641.8px;width:176.5px;height:9.5px;background:#c6c6c6"></div>
<svg style="left:44px;top:643.05px" width="6" height="7"><path d="M4.5 0.8 L1.5 3.5 L4.5 6.2" fill="none" stroke="#333" stroke-width="1.3"/></svg>
<svg style="left:339px;top:643.05px" width="6" height="7"><path d="M1.5 0.8 L4.5 3.5 L1.5 6.2" fill="none" stroke="#333" stroke-width="1.3"/></svg>
<svg style="left:37px;top:674px" width="9" height="6"><path d="M0.5 0.5 L8 0.5 L4.25 5 Z" fill="#1f5f8b"/></svg>
<div class="t" style="left:51px;top:671px;font-size:10.5px;color:#2d7296;font-weight:normal;">Hole</div>
<div class="b" style="left:39px;top:691.7px;width:310px;height:126.29999999999995px;background:#fff;border:1px solid #e4e4e4"></div>
<div class="b" style="left:40px;top:691.7px;width:308px;height:15.199999999999932px;background:#eeeeee"></div>
<div class="b" style="left:40px;top:721.6px;width:308px;height:1px;background:#f1f1f1"></div>
<div class="b" style="left:40px;top:722.6px;width:308px;height:15.7px;background:#f8f8f8"></div>
<div class="b" style="left:40px;top:737.3000000000001px;width:308px;height:1px;background:#f1f1f1"></div>
<div class="b" style="left:40px;top:753.0000000000001px;width:308px;height:1px;background:#f1f1f1"></div>
<div class="b" style="left:40px;top:754.0000000000001px;width:308px;height:15.7px;background:#f8f8f8"></div>
<div class="b" style="left:40px;top:768.7000000000002px;width:308px;height:1px;background:#f1f1f1"></div>
<div class="b" style="left:40px;top:784.4000000000002px;width:308px;height:1px;background:#f1f1f1"></div>
<div class="b" style="left:40px;top:785.4000000000002px;width:308px;height:15.7px;background:#f8f8f8"></div>
<div class="b" style="left:40px;top:800.1000000000003px;width:308px;height:1px;background:#f1f1f1"></div>
<div class="b" style="left:40px;top:815.8000000000003px;width:308px;height:1px;background:#f1f1f1"></div>
<div class="b" style="left:40px;top:816.8000000000003px;width:308px;height:1.1999999999997044px;background:#f8f8f8"></div>
<div class="b" style="left:40px;top:817.0px;width:308px;height:1px;background:#f1f1f1"></div>
<div class="b" style="left:235.2px;top:692.7px;width:1px;height:125.29999999999995px;background:#e8e8e8"></div>
<div class="b" style="left:297.8px;top:692.7px;width:1px;height:125.29999999999995px;background:#e8e8e8"></div>
<div class="t" style="left:45px;top:696.0999999999999px;font-size:9.3px;color:#2a2a2a;font-weight:normal;">Type</div>
<svg style="left:79px;top:696.8px" width="9" height="6"><path d="M0.5 5.5 L8 5.5 L4.25 1 Z" fill="#111"/></svg>
<div class="t" style="left:123px;top:696.0999999999999px;font-size:9.3px;color:#2a2a2a;font-weight:normal;">Associated Part</div>
<div class="t" style="left:240px;top:696.0999999999999px;font-size:9.3px;color:#2a2a2a;font-weight:normal;">Owner</div>
<div class="t" style="left:303px;top:696.0999999999999px;font-size:9.3px;color:#2a2a2a;font-weight:normal;">Plating Sty</div>
<div class="b" style="left:117.5px;top:706.9px;width:1.8px;height:102.70000000000005px;background:#555"></div>
<div class="b" style="left:40px;top:810.5px;width:308px;height:7px;background:#f2f2f2"></div>
<div class="b" style="left:53px;top:811.5px;width:174px;height:5px;background:#c6c6c6"></div>
<svg style="left:44px;top:810.5px" width="6" height="7"><path d="M4.5 0.8 L1.5 3.5 L4.5 6.2" fill="none" stroke="#333" stroke-width="1.3"/></svg>
<svg style="left:339px;top:810.5px" width="6" height="7"><path d="M1.5 0.8 L4.5 3.5 L1.5 6.2" fill="none" stroke="#333" stroke-width="1.3"/></svg>
<div class="b" style="left:381px;top:128px;width:1093px;height:690px;background:#fff"></div>
<div class="b" style="left:1474px;top:128px;width:25px;height:690px;background:#fff"></div>
<div class="b" style="left:381px;top:147px;width:1091px;height:1.8px;background:#36709a"></div>
<svg style="left:384px;top:131px" width="14" height="14"><path d="M2 7 L7 2 L12 7 M3.5 6 L3.5 13 L6 13 L6 9.5 L8 9.5 L8 13 L10.5 13 L10.5 6 M9.5 3.5 L9.5 2 L10.5 2 L10.5 4.5" fill="none" stroke="#444" stroke-width="1.1"/></svg>
<div class="t" style="left:400px;top:133.5px;font-size:9.5px;color:#333;font-weight:normal;">Welcom</div>
<div class="b" style="left:1472px;top:128px;width:1px;height:693px;background:#e2e2e2"></div>
<div class="b" style="left:0px;top:820.2px;width:1499px;height:1.3px;background:#d4d4d4"></div>
<div class="t" style="left:1476px;top:809px;font-size:8px;color:#222;font-weight:normal;">&#9666;</div>
<svg width="1499" height="839" style="left:0;top:0"><path d="M9 114 L17 114 M9 118 L17 118 M9 122 L17 122" stroke="#444" stroke-width="1.2"/><path d="M50 116.5 L55 116.5 L52.5 119.5 Z" fill="#222"/><rect x="59.5" y="110" width="1" height="16" fill="#e2e2e2"/><rect x="70.5" y="109.5" width="106" height="16.5" fill="#f7f7f7" stroke="#cfcfcf" stroke-width="1"/><path d="M167 117 L172 117 L169.5 120 Z" fill="#aaa"/><g transform="translate(185,110) scale(1.0)"><path d="M1 1 L11 1 L7 7 L7 12 L5 11 L5 7 Z" fill="none" stroke="#bbb" stroke-width="1"/><path d="M9 10 Q12 11 11 14" fill="none" stroke="#bbb" stroke-width="1"/></g><rect x="203.5" y="109.5" width="111" height="16.5" fill="#f7f7f7" stroke="#cfcfcf" stroke-width="1"/><path d="M305 117 L310 117 L307.5 120 Z" fill="#aaa"/><g transform="translate(322,110) scale(1.0)"><path d="M1 2 Q6 -1 11 2 L11 13 Q6 16 1 13 Z" fill="#ddd" stroke="#444" stroke-width="1.1"/><path d="M4 6 L9 12 M9 6 L4 12" stroke="#444" stroke-width="0.9"/><rect x="7" y="7" width="6" height="7" fill="#fff" stroke="#444" stroke-width="0.9"/></g><path d="M338.5 117 L343.5 117 L341 120 Z" fill="#222"/><g transform="translate(349,110) scale(1.0)"><path d="M1 4 L7 1 L13 4 L13 10 L7 13 L1 10 Z" fill="none" stroke="#c8c8c8" stroke-width="1"/><path d="M6 9 L9 12 L12 9 L9 6 Z" fill="#d4d4d4"/></g><g transform="translate(370,110) scale(1.0)"><path d="M1 4 L7 1 L13 4 L13 10 L7 13 L1 10 Z" fill="none" stroke="#c8c8c8" stroke-width="1"/><path d="M6 9 L9 12 L12 9 L9 6 Z" fill="#d4d4d4"/></g><g transform="translate(388,110) scale(1.0)"><path d="M1 4 L7 1 L13 4 L13 10 L7 13 L1 10 Z" fill="none" stroke="#c8c8c8" stroke-width="1"/><path d="M6 9 L9 12 L12 9 L9 6 Z" fill="#d4d4d4"/></g><g transform="translate(420,110) scale(1.0)"><path d="M1 4 L7 1 L13 4 L13 10 L7 13 L1 10 Z" fill="none" stroke="#c8c8c8" stroke-width="1"/><path d="M6 9 L9 12 L12 9 L9 6 Z" fill="#d4d4d4"/></g><path d="M407.5 117 L412.5 117 L410 120 Z" fill="#222"/><rect x="437.5" y="109" width="17" height="18" fill="#cfe6f1" stroke="#b6d8ea" stroke-width="0.6"/><g transform="translate(439,110) scale(1.0)"><path d="M1 4 L7 1 L13 4 L13 11 L7 14 L1 11 Z" fill="#f0d8c8" stroke="#777" stroke-width="0.9"/><path d="M7 1 L7 14 M1 4 L13 11" stroke="#e08050" stroke-width="1"/></g><rect x="460" y="110" width="1" height="16" fill="#e2e2e2"/><g transform="translate(468,110) scale(1.0)"><rect x="1" y="1" width="12" height="13" fill="#f4f4f4" stroke="#bbb" stroke-width="1"/><circle cx="7" cy="8" r="3" fill="none" stroke="#bbb" stroke-width="1"/></g><g transform="translate(486,110) scale(1.0)"><rect x="1" y="1" width="13" height="13" fill="#eee" stroke="#444" stroke-width="1.1"/><circle cx="8" cy="8.5" r="4" fill="#fff" stroke="#444" stroke-width="1.1"/><rect x="1" y="1" width="3" height="13" fill="#999"/></g><g transform="translate(507,110) scale(1.0)"><rect x="1" y="1" width="13" height="13" fill="#f4f4f4" stroke="#444" stroke-width="1"/><circle cx="7" cy="7" r="4" fill="#fff" stroke="#444" stroke-width="1"/></g><g transform="translate(525,111) scale(1.0)"><path d="M1 1 L9 1 L14 7 L14 12 L1 12 Z" fill="#eee" stroke="#444" stroke-width="1"/></g><g transform="translate(545,111) scale(1.0)"><path d="M1 12 L1 7 L6 2 L14 2 L14 12 Z" fill="#eee" stroke="#444" stroke-width="1"/><path d="M1 8 L14 8" stroke="#444" stroke-width="0.8"/></g><g transform="translate(565,110) scale(1.0)"><path d="M1 1 L5 1 L5 9 L13 9 L13 13 L1 13 Z" fill="#eee" stroke="#444" stroke-width="1"/></g><g transform="translate(585,110) scale(1.0)"><path d="M10 1 L14 1 L14 13 L1 13 L1 9 L10 9 Z" fill="#eee" stroke="#444" stroke-width="1"/></g><g transform="translate(604,110) scale(1.0)"><path d="M1 10 Q7 -2 13 8 L13 12 Q7 14 1 12 Z" fill="#ddd" stroke="#444" stroke-width="1"/><ellipse cx="7" cy="9" rx="4" ry="2" fill="none" stroke="#444" stroke-width="0.8"/></g><rect x="624" y="110" width="1" height="16" fill="#e2e2e2"/><g transform="translate(633,110) scale(1.0)"><path d="M2 13 L12 2 L14 4 L4 15 Z" fill="#fff" stroke="#444" stroke-width="1.1"/></g><rect x="653" y="110" width="1" height="16" fill="#e2e2e2"/><path d="M1489 119 L1494 119 L1491.5 122 Z" fill="#222"/><g transform="translate(38,0) scale(1.0)"><path d="M1 0 L1 11 L13 11 L13 2" fill="none" stroke="#cfe3f0" stroke-width="1.3"/><rect x="3.5" y="5.5" width="7" height="5" fill="none" stroke="#cfe3f0" stroke-width="1.1"/><rect x="4" y="0" width="6" height="3" fill="none" stroke="#cfe3f0" stroke-width="1"/></g><path d="M63 6 L68 2 M63 6 L68 10 M63 6 L70 6 Q75 6 74 11" fill="none" stroke="#cfe3f0" stroke-width="1.3"/><path d="M80.5 4.5 L85.5 4.5 L83 7.5 Z" fill="#e0eef8"/><path d="M103 6 L98 2 M103 6 L98 10 M103 6 L96 6 Q91 6 92 11" fill="none" stroke="#4d8ab0" stroke-width="1.3"/><rect x="109" y="0" width="1" height="13" fill="#2d7aa8"/><g transform="translate(113,0) scale(1.0)"><path d="M1 3 L6 0 M6 0 L6 11 L12 11 L12 4 L9 1" fill="none" stroke="#4d8ab0" stroke-width="1.1"/></g><g transform="translate(131,0) scale(1.0)"><path d="M1 3 L6 0 M6 0 L6 11 L12 11 L12 4 L9 1" fill="none" stroke="#4d8ab0" stroke-width="1.1"/></g><g transform="translate(150,0) scale(1.0)"><path d="M1 3 L6 0 M6 0 L6 11 L12 11 L12 4 L9 1" fill="none" stroke="#4d8ab0" stroke-width="1.1"/></g><g transform="translate(168,0) scale(1.0)"><path d="M1 3 L6 0 M6 0 L6 11 L12 11 L12 4 L9 1" fill="none" stroke="#4d8ab0" stroke-width="1.1"/></g><rect x="185" y="0" width="1" height="13" fill="#2d7aa8"/><g transform="translate(191,0) scale(1.0)"><rect x="1" y="0" width="9" height="11" fill="#2a3a9a"/><circle cx="5" cy="3" r="1.5" fill="#f0a030"/><circle cx="5" cy="8" r="1.5" fill="#e03030"/></g><path d="M209 4.5 L214 4.5 L211.5 7.5 Z" fill="#e0eef8"/><rect x="220" y="0" width="1" height="13" fill="#2d7aa8"/><g transform="translate(226,1) scale(1.0)"><path d="M1 6 L6 2 L12 4 L9 9 L3 9 Z" fill="none" stroke="#e6f0f8" stroke-width="1.3"/></g><rect x="243" y="0" width="1" height="13" fill="#2d7aa8"/><g transform="translate(248,0) scale(1.0)"><rect x="1" y="3" width="9" height="8" fill="none" stroke="#e6f0f8" stroke-width="1.1"/><rect x="4" y="0" width="9" height="8" fill="none" stroke="#e6f0f8" stroke-width="1.1"/></g><g transform="translate(265,0) scale(1.0)"><rect x="1" y="1" width="12" height="11" fill="none" stroke="#e6f0f8" stroke-width="1.3"/><path d="M1 4 L13 4" stroke="#e6f0f8" stroke-width="1.3"/></g><path d="M318 4.5 L323 4.5 L320.5 7.5 Z" fill="#e0eef8"/><path d="M328 3 L334 3 M328 5 L334 5 M329 7 L333 7 L331 9 Z" stroke="#e0eef8" stroke-width="0.9" fill="#e0eef8"/><rect x="1449" y="8" width="6" height="1.5" fill="#fff"/><rect x="1466" y="4" width="8" height="6" fill="none" stroke="#fff" stroke-width="1.2"/><path d="M1468 4 L1468 2 L1476 2 L1476 8 L1474 8" fill="none" stroke="#fff" stroke-width="1.2"/><path d="M1485 1 L1493 9 M1493 1 L1485 9" stroke="#fff" stroke-width="1.5"/><circle cx="1407" cy="24.5" r="3.6" fill="none" stroke="#555" stroke-width="1.1"/><path d="M1404.5 27.5 L1399.5 32" stroke="#555" stroke-width="1.6"/><path d="M1421 24 L1421 21 L1424 21 M1430 21 L1433 21 L1433 24 M1433 29 L1433 32 L1430 32 M1424 32 L1421 32 L1421 29" fill="none" stroke="#cde2f0" stroke-width="1.3"/><path d="M1441 30 L1447 24 L1453 30" fill="none" stroke="#cde2f0" stroke-width="1.4"/><circle cx="1467" cy="26.5" r="5.8" fill="none" stroke="#cde2f0" stroke-width="1.1"/><path d="M1465 24.5 Q1465 22.5 1467 22.5 Q1469 22.5 1469 24.5 Q1469 26 1467 26.7 L1467 28" fill="none" stroke="#cde2f0" stroke-width="1.1"/><circle cx="1467" cy="30" r="0.7" fill="#cde2f0"/><circle cx="1488" cy="26.5" r="5.5" fill="#8a8f96"/><rect x="0" y="292.5" width="24.2" height="34.5" fill="#fff"/><g transform="translate(10.7,139) scale(1.0)"><path d="M-1 -5.5 L1 -5.5 L1.4 -3.8 L3.2 -4.6 L4.6 -3.2 L3.8 -1.4 L5.5 -1 L5.5 1 L3.8 1.4 L4.6 3.2 L3.2 4.6 L1.4 3.8 L1 5.5 L-1 5.5 L-1.4 3.8 L-3.2 4.6 L-4.6 3.2 L-3.8 1.4 L-5.5 1 L-5.5 -1 L-3.8 -1.4 L-4.6 -3.2 L-3.2 -4.6 L-1.4 -3.8 Z" fill="#333"/><circle r="2" fill="#dadcda"/></g><g transform="translate(5,168) scale(1.0)"><path d="M1 6 L7 3 L7 1 L11 -1 L16 2 L16 13 L9 17 L1 13 Z" fill="#d8d8d8" stroke="#444" stroke-width="1.1"/><path d="M1 6 L9 10 L16 6 M9 10 L9 17 M7 3 L12 5.5 L16 3.5 M12 5.5 L12 8" fill="none" stroke="#444" stroke-width="0.9"/><path d="M9 10 L16 6 L16 13 L9 17 Z" fill="#b4b4b4" stroke="#444" stroke-width="0.9"/><path d="M1 6 L9 10 L9 17 L1 13 Z" fill="#e6e6e6" stroke="#444" stroke-width="0.9"/></g><g transform="translate(3,202) scale(1.0)"><path d="M5 4 L11 1 L16 4 L16 14 L10 17 L5 14 Z" fill="#d0d0d0" stroke="#444" stroke-width="1"/><path d="M1 6 L6 4 L10 6 L10 13 L5 15 L1 13 Z" fill="#f58a1f" stroke="#c06010" stroke-width="0.6"/><path d="M11 9 L20 16 L20 9 L11 16 Z" fill="none" stroke="#222" stroke-width="1.3"/></g><g transform="translate(3,234) scale(1.0)"><path d="M1 13 L9 8 L18 13 L18 16 L10 20 L1 16 Z" fill="#b8b8b8" stroke="#444" stroke-width="1"/><path d="M3 12 Q3 3 9 1 L11 2 L11 10 Z" fill="#d4d4d4" stroke="#444" stroke-width="1"/><ellipse cx="10" cy="13.5" rx="3.5" ry="1.8" fill="#eee" stroke="#444" stroke-width="0.9"/></g><g transform="translate(5,267) scale(1.0)"><path d="M2 4 L9 1 L15 4 L15 15 L8 18 L2 15 Z" fill="#d8d8d8" stroke="#444" stroke-width="1.1"/><path d="M2 4 L8 7 L15 4 M8 7 L8 18" fill="none" stroke="#444" stroke-width="0.9"/><path d="M8 7 L15 4 L15 15 L8 18 Z" fill="#f0f0f0" stroke="#444" stroke-width="0.9"/><path d="M5 5.5 L5 16.5" stroke="#444" stroke-width="0.9"/></g><g transform="translate(3,299) scale(1.0)"><path d="M1 8 L9 3 L17 7 L17 10 L9 15 L1 11 Z" fill="#e0e0e0" stroke="#333" stroke-width="1.1"/><path d="M1 8 L9 12 L17 7" fill="none" stroke="#333" stroke-width="0.8"/><rect x="9" y="9" width="10" height="10" fill="#fff" stroke="#222" stroke-width="1.2"/><path d="M12 12 L12 17 L16 17 M14.5 12 L14.5 15" stroke="#222" stroke-width="1.1" fill="none"/></g><g transform="translate(10.7,352) scale(1.0)"><circle r="7.2" fill="#8c8c8c" stroke="#6a6a6a" stroke-width="0.8"/><rect x="-1" y="-1.5" width="2" height="5.5" fill="#e8e8e8"/><circle cx="0" cy="-4" r="1.1" fill="#e8e8e8"/><path d="M5 -8.5 Q10 -4 9 2" fill="none" stroke="#bbb" stroke-width="1"/></g><g transform="translate(3.5,384) scale(1.0)"><rect x="1" y="1" width="18" height="18" fill="#e8e8e8" stroke="#444" stroke-width="1.2"/><rect x="1" y="1" width="18" height="3.5" fill="#7a7a7a"/><circle cx="10" cy="11.5" r="5.8" fill="#2f86c4"/><path d="M6 10 Q9 7 13 10 Q11 14 7 13 Z" fill="#8cc8ec"/></g><g transform="translate(12.5,436) scale(1.0)"><circle r="8.3" fill="#f2f2f2" stroke="#444" stroke-width="1.2"/><path d="M0 -6 L0 1.5 L-4 1.5" fill="none" stroke="#444" stroke-width="1.2"/><path d="M-6 7 L-7.5 9.5 M6 7 L7.5 9.5" stroke="#444" stroke-width="1.1"/></g><g transform="translate(5,459) scale(1.0)"><rect x="0" y="0" width="6.5" height="3.5" fill="#e02020"/><rect x="0" y="3.5" width="6.5" height="3.5" fill="#f0a020"/><rect x="0" y="7" width="6.5" height="3.5" fill="#40c040"/><rect x="0" y="10.5" width="6.5" height="4" fill="#2090e0"/><rect x="0" y="14.5" width="6.5" height="4" fill="#2040e0"/><path d="M8 7 L14 17" stroke="#111" stroke-width="2.2"/></g><g transform="translate(3.5,492) scale(1.0)"><rect x="1" y="2" width="17" height="16" fill="#f4f4f4" stroke="#444" stroke-width="1.2"/><path d="M3 0 L8 0 M12 0 L16 0" stroke="#444" stroke-width="1"/><path d="M4 15 L15 5 M4 5 L15 15" stroke="#3a6a5a" stroke-width="2.4"/></g><g transform="translate(1476,138) scale(1.0)"><rect x="1" y="1" width="5" height="5" fill="#fff" stroke="#2a48c8" stroke-width="1.1"/><rect x="1" y="7.5" width="5" height="5" fill="#f08a30" stroke="#2a48c8" stroke-width="1.1"/><rect x="1" y="14" width="5" height="5" fill="#fff" stroke="#2a48c8" stroke-width="1.1"/><path d="M8 3.5 L15 3.5 M8 16.5 L15 16.5" stroke="#999" stroke-width="1"/><path d="M7.5 10 L17 10 M7.5 10 L10.5 7.5 M7.5 10 L10.5 12.5" stroke="#e02020" stroke-width="1.2" fill="none"/></g><g transform="translate(1476,164) scale(1.0)"><path d="M1 7 L9 2 L17 6 L17 10 L9 15 L1 11 Z" fill="#e6e6e6" stroke="#444" stroke-width="1"/><path d="M1 7 L9 11 L17 6 M9 11 L9 15" fill="none" stroke="#444" stroke-width="0.8"/><ellipse cx="7" cy="6.5" rx="1.8" ry="1.1" fill="none" stroke="#555" stroke-width="0.7"/><rect x="10" y="9" width="8" height="10" fill="#fff" stroke="#444" stroke-width="1"/><path d="M12 14 L16 14 M14 12 L14 16" stroke="#444" stroke-width="0.9"/></g><g transform="translate(1485,198) scale(1.0)"><path d="M-1.2 -8 L1.2 -8 L1.8 -5.6 L4.2 -6.9 L5.9 -5.2 L4.6 -2.8 L7 -2.2 L7 0.2 L4.6 0.8 L5.9 3.2 L4.2 4.9 L1.8 3.6 L1.2 6 L-1.2 6 L-1.8 3.6 L-4.2 4.9 L-5.9 3.2 L-4.6 0.8 L-7 0.2 L-7 -2.2 L-4.6 -2.8 L-5.9 -5.2 L-4.2 -6.9 L-1.8 -5.6 Z" transform="translate(0,1)" fill="#fff" stroke="#555" stroke-width="1"/><circle cx="0" cy="0" r="2.6" fill="none" stroke="#555" stroke-width="1"/></g><g transform="translate(1476,214) scale(1.0)"><rect x="1" y="1" width="17" height="17" rx="2.5" fill="#f2f2f2" stroke="#444" stroke-width="1.1"/><rect x="1.5" y="1.5" width="4" height="16" fill="#b8b8b8"/><circle cx="11.5" cy="10" r="4.2" fill="#fff" stroke="#444" stroke-width="1.2"/></g><g transform="translate(1476,239) scale(1.0)"><path d="M1 7 L9 2 L17 6 L17 10 L9 15 L1 11 Z" fill="#e6e6e6" stroke="#444" stroke-width="1"/><path d="M1 7 L9 11 L17 6 M9 11 L9 15" fill="none" stroke="#444" stroke-width="0.8"/><ellipse cx="7" cy="6.5" rx="1.8" ry="1.1" fill="none" stroke="#555" stroke-width="0.7"/><rect x="10" y="9" width="8" height="10" fill="#fff" stroke="#444" stroke-width="1"/><circle cx="14" cy="14" r="2" fill="none" stroke="#444" stroke-width="0.9"/></g><g transform="translate(1476,264) scale(1.0)"><path d="M5 2 L9 0 L13 2 L9 4 Z" fill="#f4f4f4" stroke="#444" stroke-width="0.8"/><path d="M5 2 L9 4 L9 9 L5 7 Z" fill="#cfcfcf" stroke="#444" stroke-width="0.8"/><path d="M13 2 L9 4 L9 9 L13 7 Z" fill="#a8a8a8" stroke="#444" stroke-width="0.8"/><path d="M1 9 L5 7 L9 9 L5 11 Z" fill="#f4f4f4" stroke="#444" stroke-width="0.8"/><path d="M1 9 L5 11 L5 16 L1 14 Z" fill="#cfcfcf" stroke="#444" stroke-width="0.8"/><path d="M9 9 L5 11 L5 16 L9 14 Z" fill="#a8a8a8" stroke="#444" stroke-width="0.8"/><path d="M9 9 L13 7 L17 9 L13 11 Z" fill="#f4f4f4" stroke="#444" stroke-width="0.8"/><path d="M9 9 L13 11 L13 16 L9 14 Z" fill="#cfcfcf" stroke="#444" stroke-width="0.8"/><path d="M17 9 L13 11 L13 16 L17 14 Z" fill="#a8a8a8" stroke="#444" stroke-width="0.8"/></g><g transform="translate(1476,290) scale(1.0)"><path d="M1 6 L9 1 L17 5 L17 9 L9 14 L1 10 Z" fill="#d4d4d4" stroke="#444" stroke-width="1"/><path d="M1 6 L9 10 L17 5" fill="none" stroke="#444" stroke-width="0.8"/><path d="M3 10 L3 13 M6 12 L6 15" stroke="#444" stroke-width="1"/><circle cx="14" cy="12" r="3.5" fill="#fff" stroke="#444" stroke-width="1"/><path d="M14 10 L14 12 L15.5 12" stroke="#444" stroke-width="0.8" fill="none"/></g><g transform="translate(1476,313) scale(1.0)"><rect x="1" y="1" width="12" height="12" fill="#f5901e"/><rect x="8" y="8" width="10" height="11" fill="#fff" stroke="#444" stroke-width="1"/><path d="M10.5 11 L15.5 11 M10.5 13.5 L15.5 13.5 M10.5 16 L15.5 16" stroke="#444" stroke-width="0.9"/></g><g transform="translate(1476,339) scale(1.0)"><path d="M1 3 L5 1 L9 3 L5 5 Z" fill="#f8b060" stroke="#444" stroke-width="0.8"/><path d="M1 3 L5 5 L5 10 L1 8 Z" fill="#f08a20" stroke="#444" stroke-width="0.8"/><path d="M9 3 L5 5 L5 10 L9 8 Z" fill="#d87010" stroke="#444" stroke-width="0.8"/><path d="M5 9 L9 7 L13 9 L9 11 Z" fill="#f4f4f4" stroke="#444" stroke-width="0.8"/><path d="M5 9 L9 11 L9 16 L5 14 Z" fill="#cfcfcf" stroke="#444" stroke-width="0.8"/><path d="M13 9 L9 11 L9 16 L13 14 Z" fill="#a8a8a8" stroke="#444" stroke-width="0.8"/><path d="M14 9 L14 19 M9 14 L19 14 M12.5 10.5 L14 9 L15.5 10.5 M12.5 17.5 L14 19 L15.5 17.5 M10.5 12.5 L9 14 L10.5 15.5 M17.5 12.5 L19 14 L17.5 15.5" stroke="#222" stroke-width="0.9" fill="none"/></g><g transform="translate(1476,364) scale(1.0)"><path d="M1 3 L5 1 L9 3 L5 5 Z" fill="#f8b060" stroke="#444" stroke-width="0.8"/><path d="M1 3 L5 5 L5 10 L1 8 Z" fill="#f08a20" stroke="#444" stroke-width="0.8"/><path d="M9 3 L5 5 L5 10 L9 8 Z" fill="#d87010" stroke="#444" stroke-width="0.8"/><path d="M5 9 L9 7 L13 9 L9 11 Z" fill="#f4f4f4" stroke="#444" stroke-width="0.8"/><path d="M5 9 L9 11 L9 16 L5 14 Z" fill="#cfcfcf" stroke="#444" stroke-width="0.8"/><path d="M13 9 L9 11 L9 16 L13 14 Z" fill="#a8a8a8" stroke="#444" stroke-width="0.8"/><path d="M14 9 L14 19 M9 14 L19 14 M12.5 10.5 L14 9 L15.5 10.5 M12.5 17.5 L14 19 L15.5 17.5 M10.5 12.5 L9 14 L10.5 15.5 M17.5 12.5 L19 14 L17.5 15.5" stroke="#222" stroke-width="0.9" fill="none"/></g><rect x="1476" y="390" width="18" height="1" fill="#ddd"/></svg>
<div class="t" style="left:22px;top:113px;font-size:9.5px;color:#333;font-weight:normal;"><u>M</u>enu</div>
<div class="t" style="left:207px;top:113.5px;font-size:9.3px;color:#bdbdbd;font-weight:normal;">Within Work Part Only</div>
<div class="t" style="left:280px;top:0.5px;font-size:9.5px;color:#e8f0f6;font-weight:normal;">Window</div>
<svg width="1499" height="839" style="left:0;top:0"><polygon points="426.5,576.0 787.0,782.0 787.0,794.0 426.5,588.0" fill="#00b800" stroke="#007a00" stroke-width="0.8" /><polygon points="787.0,782.0 1416.0,420.0 1416.0,432.0 787.0,794.0" fill="#00bc00" stroke="#007a00" stroke-width="0.8" /><polygon points="426.5,576.0 483.5,544.0 560.0,501.5 668.0,433.1 1065.0,207.5 1394.4,397.2 1394.4,405.2 1416.0,420.0 787.0,782.0" fill="#00d200" stroke="#008a00" stroke-width="0.8" /><polygon points="443.1,581.0 551.6,638.3 553.6,643.3 445.1,586.0" fill="#6a6560" stroke="#444" stroke-width="0.6" /><polygon points="455.0,553.6 567.0,613.2 551.6,638.3 443.1,581.0" fill="#8a8a8a" stroke="#555" stroke-width="0.8" /><polygon points="455.0,553.6 567.0,613.2 561.1,622.7 450.5,564.0" fill="#c4c4c4" stroke="#555" stroke-width="0.7" /><polygon points="455.5,568.0 555.0,620.8 547.4,633.4 449.5,581.7" fill="#3a3630" stroke="#2a2a2a" stroke-width="0.6" /><rect x="458.4" y="561.3" width="6.4" height="4.4" fill="#f4f4f4" stroke="#555" stroke-width="0.8" transform="rotate(28 461.6 563.5)"/><rect x="470.1" y="567.6" width="6.4" height="4.4" fill="#f4f4f4" stroke="#555" stroke-width="0.8" transform="rotate(28 473.3 569.8)"/><rect x="481.8" y="573.8" width="6.4" height="4.4" fill="#f4f4f4" stroke="#555" stroke-width="0.8" transform="rotate(28 485.0 576.0)"/><rect x="493.5" y="580.0" width="6.4" height="4.4" fill="#f4f4f4" stroke="#555" stroke-width="0.8" transform="rotate(28 496.7 582.2)"/><rect x="505.2" y="586.2" width="6.4" height="4.4" fill="#f4f4f4" stroke="#555" stroke-width="0.8" transform="rotate(28 508.4 588.4)"/><rect x="516.9" y="592.4" width="6.4" height="4.4" fill="#f4f4f4" stroke="#555" stroke-width="0.8" transform="rotate(28 520.1 594.6)"/><rect x="528.6" y="598.6" width="6.4" height="4.4" fill="#f4f4f4" stroke="#555" stroke-width="0.8" transform="rotate(28 531.8 600.8)"/><rect x="540.3" y="604.8" width="6.4" height="4.4" fill="#f4f4f4" stroke="#555" stroke-width="0.8" transform="rotate(28 543.5 607.0)"/><rect x="552.0" y="611.0" width="6.4" height="4.4" fill="#f4f4f4" stroke="#555" stroke-width="0.8" transform="rotate(28 555.2 613.2)"/><ellipse cx="509.4" cy="585.1" rx="10" ry="5.8" fill="#f6c088" stroke="#c89060" stroke-width="0.5"/><polygon points="455.0,553.6 449.0,556.6 440.1,573.0 444.3,578.3" fill="#b8b8b8" stroke="#555" stroke-width="0.6" /><polygon points="567.0,613.2 571.0,619.2 554.6,634.3 551.6,638.3" fill="#c0c0c0" stroke="#555" stroke-width="0.6" /><polygon points="557.2,645.8 665.9,705.9 667.9,710.9 559.2,650.8" fill="#6a6560" stroke="#444" stroke-width="0.6" /><polygon points="567.2,620.0 678.7,680.1 665.9,705.9 557.2,645.8" fill="#8a8a8a" stroke="#555" stroke-width="0.8" /><polygon points="567.2,620.0 678.7,680.1 673.8,689.9 563.4,629.8" fill="#c4c4c4" stroke="#555" stroke-width="0.7" /><polygon points="568.5,633.8 667.8,687.9 661.5,700.8 563.4,646.7" fill="#3a3630" stroke="#2a2a2a" stroke-width="0.6" /><rect x="571.0" y="627.5" width="6.4" height="4.4" fill="#f4f4f4" stroke="#555" stroke-width="0.8" transform="rotate(28 574.2 629.7)"/><rect x="582.6" y="633.8" width="6.4" height="4.4" fill="#f4f4f4" stroke="#555" stroke-width="0.8" transform="rotate(28 585.8 636.0)"/><rect x="594.3" y="640.1" width="6.4" height="4.4" fill="#f4f4f4" stroke="#555" stroke-width="0.8" transform="rotate(28 597.5 642.3)"/><rect x="605.9" y="646.4" width="6.4" height="4.4" fill="#f4f4f4" stroke="#555" stroke-width="0.8" transform="rotate(28 609.1 648.6)"/><rect x="617.6" y="652.8" width="6.4" height="4.4" fill="#f4f4f4" stroke="#555" stroke-width="0.8" transform="rotate(28 620.8 655.0)"/><rect x="629.2" y="659.1" width="6.4" height="4.4" fill="#f4f4f4" stroke="#555" stroke-width="0.8" transform="rotate(28 632.4 661.3)"/><rect x="640.9" y="665.4" width="6.4" height="4.4" fill="#f4f4f4" stroke="#555" stroke-width="0.8" transform="rotate(28 644.1 667.6)"/><rect x="652.5" y="671.7" width="6.4" height="4.4" fill="#f4f4f4" stroke="#555" stroke-width="0.8" transform="rotate(28 655.7 673.9)"/><rect x="664.2" y="678.0" width="6.4" height="4.4" fill="#f4f4f4" stroke="#555" stroke-width="0.8" transform="rotate(28 667.4 680.2)"/><ellipse cx="620.7" cy="649.2" rx="10" ry="5.8" fill="#f6c088" stroke="#c89060" stroke-width="0.5"/><polygon points="567.2,620.0 561.2,623.0 554.2,637.8 558.2,643.2" fill="#b8b8b8" stroke="#555" stroke-width="0.6" /><polygon points="678.7,680.1 682.7,686.1 668.9,701.9 665.9,705.9" fill="#c0c0c0" stroke="#555" stroke-width="0.6" /><polygon points="665.9,705.9 777.4,766.0 779.4,771.0 667.9,710.9" fill="#6a6560" stroke="#444" stroke-width="0.6" /><polygon points="677.3,683.0 793.1,745.9 777.4,766.0 665.9,705.9" fill="#8a8a8a" stroke="#555" stroke-width="0.8" /><polygon points="677.3,683.0 793.1,745.9 787.1,753.5 673.0,691.7" fill="#c4c4c4" stroke="#555" stroke-width="0.7" /><polygon points="678.2,695.7 780.8,751.3 773.1,761.4 672.4,707.1" fill="#3a3630" stroke="#2a2a2a" stroke-width="0.6" /><rect x="681.1" y="690.1" width="6.4" height="4.4" fill="#f4f4f4" stroke="#555" stroke-width="0.8" transform="rotate(28 684.3 692.3)"/><rect x="693.2" y="696.7" width="6.4" height="4.4" fill="#f4f4f4" stroke="#555" stroke-width="0.8" transform="rotate(28 696.4 698.9)"/><rect x="705.3" y="703.2" width="6.4" height="4.4" fill="#f4f4f4" stroke="#555" stroke-width="0.8" transform="rotate(28 708.5 705.4)"/><rect x="717.4" y="709.8" width="6.4" height="4.4" fill="#f4f4f4" stroke="#555" stroke-width="0.8" transform="rotate(28 720.6 712.0)"/><rect x="729.4" y="716.3" width="6.4" height="4.4" fill="#f4f4f4" stroke="#555" stroke-width="0.8" transform="rotate(28 732.6 718.5)"/><rect x="741.5" y="722.9" width="6.4" height="4.4" fill="#f4f4f4" stroke="#555" stroke-width="0.8" transform="rotate(28 744.7 725.1)"/><rect x="753.6" y="729.4" width="6.4" height="4.4" fill="#f4f4f4" stroke="#555" stroke-width="0.8" transform="rotate(28 756.8 731.6)"/><rect x="765.6" y="736.0" width="6.4" height="4.4" fill="#f4f4f4" stroke="#555" stroke-width="0.8" transform="rotate(28 768.8 738.2)"/><rect x="777.7" y="742.5" width="6.4" height="4.4" fill="#f4f4f4" stroke="#555" stroke-width="0.8" transform="rotate(28 780.9 744.7)"/><ellipse cx="731.7" cy="713.6" rx="10" ry="5.8" fill="#f6c088" stroke="#c89060" stroke-width="0.5"/><polygon points="677.3,683.0 671.3,686.0 662.9,697.9 667.0,703.6" fill="#b8b8b8" stroke="#555" stroke-width="0.6" /><polygon points="793.1,745.9 797.1,751.9 780.4,762.0 777.4,766.0" fill="#c0c0c0" stroke="#555" stroke-width="0.6" /><polygon points="482.9,509.0 551.6,509.0 575.4,531.0 575.9,583.4 554.0,594.2 534.9,583.4 482.9,554.8" fill="#060606" stroke="#000" stroke-width="0.8" /><path d="M483 531 L552 555 L575 531 M552 555 L553 594" fill="none" stroke="#3a3a3a" stroke-width="0.8" /><circle cx="490" cy="541" r="4" fill="none" stroke="#444" stroke-width="0.9"/><circle cx="546" cy="572" r="4" fill="none" stroke="#444" stroke-width="0.9"/><path d="M500 548 L500 565 L520 575 L520 558 M520 560 L534 567 L534 583" fill="none" stroke="#333" stroke-width="0.8" /><rect x="559" y="578" width="7" height="8" fill="none" stroke="#555" stroke-width="0.7"/><polygon points="574.0,527.0 629.0,557.0 629.0,569.0 576.0,541.0" fill="#d2d2d2" stroke="#666" stroke-width="0.7" /><polygon points="554.0,508.0 612.0,541.0 629.0,551.4 629.0,557.0 574.0,527.0" fill="#f2f2f2" stroke="#777" stroke-width="0.7" /><path d="M590 536 L590 550 M610 547 L610 561" fill="none" stroke="#999" stroke-width="0.7" /><polygon points="629.0,551.4 876.0,407.4 888.0,405.8 888.0,418.0 629.0,563.0" fill="#d6d6d6" stroke="#555" stroke-width="0.7" /><polygon points="612.0,534.0 843.0,407.0 856.0,400.0 888.0,405.8 876.0,407.4 629.0,551.4" fill="#fbfbfb" stroke="#777" stroke-width="0.7" /><polygon points="786.0,369.6 790.0,354.4 801.5,356.3 870.0,392.5 872.0,400.0 843.4,403.0 793.8,379.0" fill="#e2e2e2" stroke="#666" stroke-width="0.7" /><polygon points="806.0,370.0 858.0,398.0 866.0,394.0 812.0,365.0" fill="#b4b4b4" stroke="#777" stroke-width="0.6" /><path d="M796 357 L830 376 M800 372 L806 378" fill="none" stroke="#777" stroke-width="0.7" /><polygon points="868.0,392.0 876.0,388.0 882.0,398.0 874.0,402.0" fill="#ccc" stroke="#555" stroke-width="0.6" /><polygon points="843.5,334.0 938.0,385.0 938.0,405.0 843.5,354.0" fill="#575757" stroke="#2a2a2a" stroke-width="0.7" /><polygon points="938.0,385.0 958.4,374.0 958.4,394.0 938.0,405.0" fill="#606060" stroke="#2a2a2a" stroke-width="0.7" /><polygon points="843.5,334.0 862.5,322.0 958.4,374.0 938.0,385.0" fill="#6e6e6e" stroke="#2a2a2a" stroke-width="0.7" /><polygon points="853.0,337.0 864.0,331.0 944.0,375.0 933.0,381.0" fill="#4a4a4a" stroke="#333" stroke-width="0.6" /><polygon points="866.0,336.0 874.0,331.0 930.0,362.0 922.0,367.0" fill="#7a7a7a" stroke="#444" stroke-width="0.5" /><path d="M858 358 L935 400" fill="none" stroke="#333" stroke-width="2" stroke-dasharray="0.8 1.2"/><polygon points="843.5,336.0 850.0,332.0 850.0,328.0 843.5,332.0" fill="#777" stroke="#333" stroke-width="0.6" /><polygon points="862.5,324.0 868.0,321.0 868.0,316.0 862.5,319.0" fill="#777" stroke="#333" stroke-width="0.6" /><polygon points="886.8,431.7 913.5,445.0 913.5,470.0 886.8,456.7" fill="#404040" stroke="#222" stroke-width="0.7" /><polygon points="913.5,445.0 965.2,415.0 965.2,440.0 913.5,470.0" fill="#4a4a4a" stroke="#222" stroke-width="0.7" /><polygon points="886.8,431.7 936.8,403.3 965.2,415.0 913.5,445.0" fill="#5c5c5c" stroke="#222" stroke-width="0.7" /><path d="M920 466 L920 476 L918 478" fill="none" stroke="#777" stroke-width="1.4" /><path d="M930 461 L930 471 L928 473" fill="none" stroke="#777" stroke-width="1.4" /><path d="M950 450 L950 460 L948 462" fill="none" stroke="#777" stroke-width="1.4" /><path d="M958 446 L958 456 L956 458" fill="none" stroke="#777" stroke-width="1.4" /><polygon points="859.0,457.0 886.0,472.0 886.0,480.0 859.0,465.0" fill="#404040" stroke="#222" stroke-width="0.7" /><polygon points="886.0,472.0 894.0,467.0 894.0,475.0 886.0,480.0" fill="#484848" stroke="#222" stroke-width="0.7" /><polygon points="859.0,457.0 867.0,452.0 894.0,467.0 886.0,472.0" fill="#555" stroke="#222" stroke-width="0.7" /><rect x="866.4" y="432" width="3.2" height="27" rx="1.2" fill="#c8c8c8" stroke="#777" stroke-width="0.5"/><rect x="875.4" y="437" width="3.2" height="27" rx="1.2" fill="#c8c8c8" stroke="#777" stroke-width="0.5"/><rect x="884.4" y="442" width="3.2" height="27" rx="1.2" fill="#c8c8c8" stroke="#777" stroke-width="0.5"/><polygon points="715.0,530.2 743.6,544.5 743.6,570.5 715.0,556.2" fill="#3e3e3e" stroke="#222" stroke-width="0.7" /><polygon points="743.6,544.5 796.0,513.5 796.0,539.5 743.6,570.5" fill="#474747" stroke="#222" stroke-width="0.7" /><polygon points="715.0,530.2 767.4,499.2 796.0,513.5 743.6,544.5" fill="#5a5a5a" stroke="#222" stroke-width="0.7" /><path d="M754 572 L754 583 L752 585" fill="none" stroke="#888" stroke-width="1.4" /><path d="M760 569 L760 580 L758 582" fill="none" stroke="#888" stroke-width="1.4" /><path d="M778 558 L778 569 L776 571" fill="none" stroke="#888" stroke-width="1.4" /><path d="M784 555 L784 566 L782 568" fill="none" stroke="#888" stroke-width="1.4" /><polygon points="794.9,515.9 806.8,527.8 806.8,532.8 794.9,520.9" fill="#454545" stroke="#222" stroke-width="0.7" /><polygon points="806.8,527.8 829.4,515.9 829.4,520.9 806.8,532.8" fill="#505050" stroke="#222" stroke-width="0.7" /><polygon points="794.9,515.9 817.5,502.8 829.4,515.9 806.8,527.8" fill="#6a6a6a" stroke="#222" stroke-width="0.7" /><polygon points="694.5,588.6 700.2,562.9 714.5,560.0 723.0,574.3 740.2,600.0 740.2,612.9 721.6,624.4 694.5,605.8" fill="#ececec" stroke="#666" stroke-width="0.7" /><path d="M700 563 L700 600 L722 612 L740 600 M722 612 L722 624 M714 560 L714 595" fill="none" stroke="#888" stroke-width="0.6" /><rect x="725" y="575" width="3" height="22" fill="#bbb" stroke="#777" stroke-width="0.5"/><polygon points="779.0,577.0 955.0,474.0 1091.0,551.0 912.0,654.0" fill="#aee07a" stroke="#5a9a30" stroke-width="0.7" /><path d="M796.8 585.9 Q782.0 577.5 796.8 569.1 L938.7 487.9 Q953.5 479.5 968.5 487.6 L1073.0 543.9 Q1088.0 552.0 1073.1 560.2 L924.9 642.3 Q910.0 650.5 895.2 642.1 Z" fill="#b4bccc" stroke="#6a7080" stroke-width="0.7" /><path d="M796.8 580.9 Q782.0 572.5 796.8 564.1 L938.7 482.9 Q953.5 474.5 968.5 482.6 L1073.0 538.9 Q1088.0 547.0 1073.1 555.2 L924.9 637.3 Q910.0 645.5 895.2 637.1 Z" fill="#dfe5f3" stroke="#8a90a0" stroke-width="0.7" /><path d="M840.2 585.7 Q821.0 575.0 839.7 563.4 L933.3 505.1 Q952.0 493.5 971.3 504.0 L1030.7 536.5 Q1050.0 547.0 1030.9 557.9 L931.1 614.6 Q912.0 625.5 892.8 614.8 Z" fill="#c8cede" stroke="#7a8090" stroke-width="0.7" /><path d="M840.2 582.7 Q821.0 572.0 839.7 560.4 L933.3 502.1 Q952.0 490.5 971.3 501.0 L1030.7 533.5 Q1050.0 544.0 1030.9 554.9 L931.1 611.6 Q912.0 622.5 892.8 611.8 Z" fill="#e6ebf7" stroke="#6a7284" stroke-width="0.8" /><polygon points="909.0,668.0 919.0,674.0 919.0,688.0 909.0,682.0" fill="#444" stroke="#222" stroke-width="0.7" /><polygon points="919.0,674.0 972.0,644.0 972.0,658.0 919.0,688.0" fill="#4e4e4e" stroke="#222" stroke-width="0.7" /><polygon points="909.0,668.0 962.0,638.0 972.0,644.0 919.0,674.0" fill="#5a5a5a" stroke="#222" stroke-width="0.7" /><rect x="913.5" y="636.0" width="3" height="31" fill="#cfcfcf" stroke="#777" stroke-width="0.5"/><rect x="919.5" y="639.5" width="3" height="31" fill="#cfcfcf" stroke="#777" stroke-width="0.5"/><rect x="924.0" y="630.0" width="3" height="31" fill="#cfcfcf" stroke="#777" stroke-width="0.5"/><rect x="930.0" y="633.5" width="3" height="31" fill="#cfcfcf" stroke="#777" stroke-width="0.5"/><rect x="934.5" y="624.0" width="3" height="31" fill="#cfcfcf" stroke="#777" stroke-width="0.5"/><rect x="940.5" y="627.5" width="3" height="31" fill="#cfcfcf" stroke="#777" stroke-width="0.5"/><rect x="945.0" y="618.0" width="3" height="31" fill="#cfcfcf" stroke="#777" stroke-width="0.5"/><rect x="951.0" y="621.5" width="3" height="31" fill="#cfcfcf" stroke="#777" stroke-width="0.5"/><rect x="955.5" y="612.0" width="3" height="31" fill="#cfcfcf" stroke="#777" stroke-width="0.5"/><rect x="961.5" y="615.5" width="3" height="31" fill="#cfcfcf" stroke="#777" stroke-width="0.5"/><polygon points="968.5,453.4 998.6,470.0 998.6,473.0 968.5,456.4" fill="#3c3c3c" stroke="#2a2a2a" stroke-width="0.7" /><polygon points="998.6,470.0 1045.3,441.7 1045.3,444.7 998.6,473.0" fill="#464646" stroke="#2a2a2a" stroke-width="0.7" /><polygon points="968.5,453.4 1018.6,423.4 1045.3,441.7 998.6,470.0" fill="#6e6e6e" stroke="#2a2a2a" stroke-width="0.7" /><circle cx="994.6" cy="464.0" r="1.2" fill="#222"/><polygon points="1000.2,470.0 1028.6,488.4 1028.6,491.4 1000.2,473.0" fill="#3c3c3c" stroke="#2a2a2a" stroke-width="0.7" /><polygon points="1028.6,488.4 1078.6,460.0 1078.6,463.0 1028.6,491.4" fill="#464646" stroke="#2a2a2a" stroke-width="0.7" /><polygon points="1000.2,470.0 1053.6,441.7 1078.6,460.0 1028.6,488.4" fill="#6e6e6e" stroke="#2a2a2a" stroke-width="0.7" /><circle cx="1024.6" cy="482.4" r="1.2" fill="#222"/><polygon points="1031.9,488.4 1060.3,506.8 1060.3,509.8 1031.9,491.4" fill="#3c3c3c" stroke="#2a2a2a" stroke-width="0.7" /><polygon points="1060.3,506.8 1108.7,480.0 1108.7,483.0 1060.3,509.8" fill="#464646" stroke="#2a2a2a" stroke-width="0.7" /><polygon points="1031.9,488.4 1083.6,461.7 1108.7,480.0 1060.3,506.8" fill="#6e6e6e" stroke="#2a2a2a" stroke-width="0.7" /><circle cx="1056.3" cy="500.8" r="1.2" fill="#222"/><polygon points="1063.6,506.8 1092.0,525.1 1092.0,528.1 1063.6,509.8" fill="#3c3c3c" stroke="#2a2a2a" stroke-width="0.7" /><polygon points="1092.0,525.1 1142.0,496.8 1142.0,499.8 1092.0,528.1" fill="#464646" stroke="#2a2a2a" stroke-width="0.7" /><polygon points="1063.6,506.8 1113.7,478.4 1142.0,496.8 1092.0,525.1" fill="#6e6e6e" stroke="#2a2a2a" stroke-width="0.7" /><circle cx="1088.0" cy="519.1" r="1.2" fill="#222"/><polygon points="1053.3,211.7 1070.5,200.3 1110.6,175.5 1153.5,200.3 1153.5,217.4 1112.5,241.3 1110.0,260.0 1097.2,277.5 1055.3,254.6" fill="#e6e6e6" stroke="#666" stroke-width="0.8" /><polygon points="1070.5,200.3 1110.6,175.5 1153.5,200.3 1112.5,224.0" fill="#f6f6f6" stroke="#666" stroke-width="0.7" /><polygon points="1053.3,211.7 1070.5,200.3 1112.5,224.0 1112.5,241.3 1095.0,230.0" fill="#eeeeee" stroke="#666" stroke-width="0.7" /><path d="M1058 216 L1058 250 L1095 270 M1075 230 L1075 260 M1086 236 L1086 266" fill="none" stroke="#888" stroke-width="0.7" /><path d="M1073 238 L1073 254 M1080 236 L1080 258 M1087 240 L1087 262" fill="none" stroke="#777" stroke-width="1.5" /><polygon points="1108.6,245.1 1129.6,253.7 1129.6,311.8 1108.6,296.6" fill="#d6d6d6" stroke="#555" stroke-width="0.8" /><polygon points="1129.6,253.7 1196.4,212.7 1200.2,220.3 1200.2,268.0 1129.6,311.8" fill="#e8e8e8" stroke="#555" stroke-width="0.8" /><polygon points="1108.6,245.1 1180.2,203.1 1196.4,212.7 1129.6,253.7" fill="#f4f4f4" stroke="#555" stroke-width="0.8" /><polygon points="1156.0,224.0 1183.0,208.0 1186.0,213.0 1159.0,229.0" fill="#c8c8c8" stroke="#777" stroke-width="0.6" /><polygon points="1170.0,244.0 1194.0,230.0 1194.0,236.0 1170.0,253.0" fill="#cfcfcf" stroke="#666" stroke-width="0.6" /><polygon points="1170.0,264.0 1194.0,250.0 1194.0,256.0 1170.0,273.0" fill="#cfcfcf" stroke="#666" stroke-width="0.6" /><polygon points="1204.4,310.0 1261.0,341.8 1261.0,397.3 1204.4,365.5" fill="#bcbcbc" stroke="#333" stroke-width="0.7" /><polygon points="1261.0,341.8 1336.9,297.6 1336.9,353.1 1261.0,397.3" fill="#d2d2d2" stroke="#333" stroke-width="0.7" /><polygon points="1204.4,310.0 1280.3,265.9 1336.9,297.6 1261.0,341.8" fill="#f4f4f4" stroke="#333" stroke-width="0.7" /><polygon points="1273.0,280.0 1290.0,271.0 1298.0,276.0 1281.0,285.0" fill="#383838" stroke="none" stroke-width="0.8" /><polygon points="1293.0,292.0 1310.0,283.0 1318.0,288.0 1301.0,297.0" fill="#383838" stroke="none" stroke-width="0.8" /><polygon points="1318.0,328.0 1336.0,318.0 1336.0,326.0 1318.0,336.0" fill="#383838" stroke="none" stroke-width="0.8" /><polygon points="1318.0,345.0 1336.0,335.0 1336.0,343.0 1318.0,353.0" fill="#383838" stroke="none" stroke-width="0.8" /><path d="M1261 341.8 L1336.9 297.6" fill="none" stroke="#888" stroke-width="1.5" /><polygon points="984.6,299.0 1010.8,312.1 1010.8,316.1 984.6,303.0" fill="#2e2e2e" stroke="#222" stroke-width="0.7" /><polygon points="1010.8,312.1 1033.1,297.7 1033.1,301.7 1010.8,316.1" fill="#333" stroke="#222" stroke-width="0.7" /><polygon points="984.6,299.0 1008.2,284.6 1033.1,297.7 1010.8,312.1" fill="#6a6a6a" stroke="#222" stroke-width="0.7" /><polygon points="1149.8,405.2 1183.9,426.2 1183.9,430.2 1149.8,409.2" fill="#2e2e2e" stroke="#222" stroke-width="0.7" /><polygon points="1183.9,426.2 1218.0,405.2 1218.0,409.2 1183.9,430.2" fill="#333" stroke="#222" stroke-width="0.7" /><polygon points="1149.8,405.2 1183.9,384.2 1218.0,405.2 1183.9,426.2" fill="#6a6a6a" stroke="#222" stroke-width="0.7" /><polygon points="1059.3,329.2 1076.4,339.7 1076.4,342.7 1059.3,332.2" fill="#333" stroke="#222" stroke-width="0.7" /><polygon points="1076.4,339.7 1094.7,329.2 1094.7,332.2 1076.4,342.7" fill="#3a3a3a" stroke="#222" stroke-width="0.7" /><polygon points="1059.3,329.2 1076.4,318.7 1094.7,329.2 1076.4,339.7" fill="#666" stroke="#222" stroke-width="0.7" /><polygon points="1110.5,358.0 1128.8,365.9 1128.8,369.9 1110.5,362.0" fill="#333" stroke="#222" stroke-width="0.7" /><polygon points="1128.8,365.9 1143.3,354.1 1143.3,358.1 1128.8,369.9" fill="#3a3a3a" stroke="#222" stroke-width="0.7" /><polygon points="1110.5,358.0 1130.1,346.2 1143.3,354.1 1128.8,365.9" fill="#6a6a6a" stroke="#222" stroke-width="0.7" /><polygon points="1101.0,311.0 1115.0,319.0 1115.0,326.0 1101.0,318.0" fill="#2a2a2a" stroke="#111" stroke-width="0.7" /><polygon points="1115.0,319.0 1127.0,312.0 1127.0,319.0 1115.0,326.0" fill="#333" stroke="#111" stroke-width="0.7" /><polygon points="1101.0,311.0 1113.0,304.0 1127.0,312.0 1115.0,319.0" fill="#555" stroke="#111" stroke-width="0.7" /><polygon points="1107.7,410.6 1111.7,412.9 1111.7,414.4 1107.7,412.1" fill="#222" stroke="#222" stroke-width="0.6" /><polygon points="1111.7,412.9 1114.3,411.4 1114.3,412.9 1111.7,414.4" fill="#222" stroke="#222" stroke-width="0.6" /><polygon points="1107.7,410.6 1110.3,409.1 1114.3,411.4 1111.7,412.9" fill="#333" stroke="#222" stroke-width="0.6" /><polygon points="1095.7,417.6 1099.7,419.9 1099.7,421.4 1095.7,419.1" fill="#222" stroke="#222" stroke-width="0.6" /><polygon points="1099.7,419.9 1102.3,418.4 1102.3,419.9 1099.7,421.4" fill="#222" stroke="#222" stroke-width="0.6" /><polygon points="1095.7,417.6 1098.3,416.1 1102.3,418.4 1099.7,419.9" fill="#333" stroke="#222" stroke-width="0.6" /><polygon points="1113.9,414.0 1117.9,416.3 1117.9,417.8 1113.9,415.5" fill="#222" stroke="#222" stroke-width="0.6" /><polygon points="1117.9,416.3 1120.5,414.8 1120.5,416.3 1117.9,417.8" fill="#222" stroke="#222" stroke-width="0.6" /><polygon points="1113.9,414.0 1116.5,412.5 1120.5,414.8 1117.9,416.3" fill="#333" stroke="#222" stroke-width="0.6" /><polygon points="1101.9,421.0 1105.9,423.3 1105.9,424.8 1101.9,422.5" fill="#222" stroke="#222" stroke-width="0.6" /><polygon points="1105.9,423.3 1108.5,421.8 1108.5,423.3 1105.9,424.8" fill="#222" stroke="#222" stroke-width="0.6" /><polygon points="1101.9,421.0 1104.5,419.5 1108.5,421.8 1105.9,423.3" fill="#333" stroke="#222" stroke-width="0.6" /><polygon points="1120.1,417.4 1124.1,419.7 1124.1,421.2 1120.1,418.9" fill="#222" stroke="#222" stroke-width="0.6" /><polygon points="1124.1,419.7 1126.7,418.2 1126.7,419.7 1124.1,421.2" fill="#222" stroke="#222" stroke-width="0.6" /><polygon points="1120.1,417.4 1122.7,415.9 1126.7,418.2 1124.1,419.7" fill="#333" stroke="#222" stroke-width="0.6" /><polygon points="1108.1,424.4 1112.1,426.7 1112.1,428.2 1108.1,425.9" fill="#222" stroke="#222" stroke-width="0.6" /><polygon points="1112.1,426.7 1114.7,425.2 1114.7,426.7 1112.1,428.2" fill="#222" stroke="#222" stroke-width="0.6" /><polygon points="1108.1,424.4 1110.7,422.9 1114.7,425.2 1112.1,426.7" fill="#333" stroke="#222" stroke-width="0.6" /><polygon points="1126.3,420.8 1130.3,423.1 1130.3,424.6 1126.3,422.3" fill="#222" stroke="#222" stroke-width="0.6" /><polygon points="1130.3,423.1 1132.9,421.6 1132.9,423.1 1130.3,424.6" fill="#222" stroke="#222" stroke-width="0.6" /><polygon points="1126.3,420.8 1128.9,419.3 1132.9,421.6 1130.3,423.1" fill="#333" stroke="#222" stroke-width="0.6" /><polygon points="1114.3,427.8 1118.3,430.1 1118.3,431.6 1114.3,429.3" fill="#222" stroke="#222" stroke-width="0.6" /><polygon points="1118.3,430.1 1120.9,428.6 1120.9,430.1 1118.3,431.6" fill="#222" stroke="#222" stroke-width="0.6" /><polygon points="1114.3,427.8 1116.9,426.3 1120.9,428.6 1118.3,430.1" fill="#333" stroke="#222" stroke-width="0.6" /><polygon points="1132.5,424.2 1136.5,426.5 1136.5,428.0 1132.5,425.7" fill="#222" stroke="#222" stroke-width="0.6" /><polygon points="1136.5,426.5 1139.1,425.0 1139.1,426.5 1136.5,428.0" fill="#222" stroke="#222" stroke-width="0.6" /><polygon points="1132.5,424.2 1135.1,422.7 1139.1,425.0 1136.5,426.5" fill="#333" stroke="#222" stroke-width="0.6" /><polygon points="1120.5,431.2 1124.5,433.5 1124.5,435.0 1120.5,432.7" fill="#222" stroke="#222" stroke-width="0.6" /><polygon points="1124.5,433.5 1127.1,432.0 1127.1,433.5 1124.5,435.0" fill="#222" stroke="#222" stroke-width="0.6" /><polygon points="1120.5,431.2 1123.1,429.7 1127.1,432.0 1124.5,433.5" fill="#333" stroke="#222" stroke-width="0.6" /><polygon points="1138.7,427.6 1142.7,429.9 1142.7,431.4 1138.7,429.1" fill="#222" stroke="#222" stroke-width="0.6" /><polygon points="1142.7,429.9 1145.3,428.4 1145.3,429.9 1142.7,431.4" fill="#222" stroke="#222" stroke-width="0.6" /><polygon points="1138.7,427.6 1141.3,426.1 1145.3,428.4 1142.7,429.9" fill="#333" stroke="#222" stroke-width="0.6" /><polygon points="1126.7,434.6 1130.7,436.9 1130.7,438.4 1126.7,436.1" fill="#222" stroke="#222" stroke-width="0.6" /><polygon points="1130.7,436.9 1133.3,435.4 1133.3,436.9 1130.7,438.4" fill="#222" stroke="#222" stroke-width="0.6" /><polygon points="1126.7,434.6 1129.3,433.1 1133.3,435.4 1130.7,436.9" fill="#333" stroke="#222" stroke-width="0.6" /><polygon points="1144.9,431.0 1148.9,433.3 1148.9,434.8 1144.9,432.5" fill="#222" stroke="#222" stroke-width="0.6" /><polygon points="1148.9,433.3 1151.5,431.8 1151.5,433.3 1148.9,434.8" fill="#222" stroke="#222" stroke-width="0.6" /><polygon points="1144.9,431.0 1147.5,429.5 1151.5,431.8 1148.9,433.3" fill="#333" stroke="#222" stroke-width="0.6" /><polygon points="1132.9,438.0 1136.9,440.3 1136.9,441.8 1132.9,439.5" fill="#222" stroke="#222" stroke-width="0.6" /><polygon points="1136.9,440.3 1139.5,438.8 1139.5,440.3 1136.9,441.8" fill="#222" stroke="#222" stroke-width="0.6" /><polygon points="1132.9,438.0 1135.5,436.5 1139.5,438.8 1136.9,440.3" fill="#333" stroke="#222" stroke-width="0.6" /><polygon points="1151.1,434.4 1155.1,436.7 1155.1,438.2 1151.1,435.9" fill="#222" stroke="#222" stroke-width="0.6" /><polygon points="1155.1,436.7 1157.7,435.2 1157.7,436.7 1155.1,438.2" fill="#222" stroke="#222" stroke-width="0.6" /><polygon points="1151.1,434.4 1153.7,432.9 1157.7,435.2 1155.1,436.7" fill="#333" stroke="#222" stroke-width="0.6" /><polygon points="1139.1,441.4 1143.1,443.7 1143.1,445.2 1139.1,442.9" fill="#222" stroke="#222" stroke-width="0.6" /><polygon points="1143.1,443.7 1145.7,442.2 1145.7,443.7 1143.1,445.2" fill="#222" stroke="#222" stroke-width="0.6" /><polygon points="1139.1,441.4 1141.7,439.9 1145.7,442.2 1143.1,443.7" fill="#333" stroke="#222" stroke-width="0.6" /><polygon points="1157.3,437.8 1161.3,440.1 1161.3,441.6 1157.3,439.3" fill="#222" stroke="#222" stroke-width="0.6" /><polygon points="1161.3,440.1 1163.9,438.6 1163.9,440.1 1161.3,441.6" fill="#222" stroke="#222" stroke-width="0.6" /><polygon points="1157.3,437.8 1159.9,436.3 1163.9,438.6 1161.3,440.1" fill="#333" stroke="#222" stroke-width="0.6" /><polygon points="1145.3,444.8 1149.3,447.1 1149.3,448.6 1145.3,446.3" fill="#222" stroke="#222" stroke-width="0.6" /><polygon points="1149.3,447.1 1151.9,445.6 1151.9,447.1 1149.3,448.6" fill="#222" stroke="#222" stroke-width="0.6" /><polygon points="1145.3,444.8 1147.9,443.3 1151.9,445.6 1149.3,447.1" fill="#333" stroke="#222" stroke-width="0.6" /><polygon points="1163.5,441.2 1167.5,443.5 1167.5,445.0 1163.5,442.7" fill="#222" stroke="#222" stroke-width="0.6" /><polygon points="1167.5,443.5 1170.1,442.0 1170.1,443.5 1167.5,445.0" fill="#222" stroke="#222" stroke-width="0.6" /><polygon points="1163.5,441.2 1166.1,439.7 1170.1,442.0 1167.5,443.5" fill="#333" stroke="#222" stroke-width="0.6" /><polygon points="1151.5,448.2 1155.5,450.5 1155.5,452.0 1151.5,449.7" fill="#222" stroke="#222" stroke-width="0.6" /><polygon points="1155.5,450.5 1158.1,449.0 1158.1,450.5 1155.5,452.0" fill="#222" stroke="#222" stroke-width="0.6" /><polygon points="1151.5,448.2 1154.1,446.7 1158.1,449.0 1155.5,450.5" fill="#333" stroke="#222" stroke-width="0.6" /><polygon points="1202.3,430.6 1206.7,433.1 1206.7,434.6 1202.3,432.1" fill="#222" stroke="#222" stroke-width="0.6" /><polygon points="1206.7,433.1 1209.7,431.4 1209.7,432.9 1206.7,434.6" fill="#222" stroke="#222" stroke-width="0.6" /><polygon points="1202.3,430.6 1205.3,428.9 1209.7,431.4 1206.7,433.1" fill="#444" stroke="#222" stroke-width="0.6" /><polygon points="1207.8,427.4 1212.2,429.9 1212.2,431.4 1207.8,428.9" fill="#222" stroke="#222" stroke-width="0.6" /><polygon points="1212.2,429.9 1215.2,428.2 1215.2,429.7 1212.2,431.4" fill="#222" stroke="#222" stroke-width="0.6" /><polygon points="1207.8,427.4 1210.8,425.7 1215.2,428.2 1212.2,429.9" fill="#444" stroke="#222" stroke-width="0.6" /><polygon points="1213.3,424.2 1217.7,426.7 1217.7,428.2 1213.3,425.7" fill="#222" stroke="#222" stroke-width="0.6" /><polygon points="1217.7,426.7 1220.7,425.0 1220.7,426.5 1217.7,428.2" fill="#222" stroke="#222" stroke-width="0.6" /><polygon points="1213.3,424.2 1216.3,422.5 1220.7,425.0 1217.7,426.7" fill="#444" stroke="#222" stroke-width="0.6" /><polygon points="1218.8,421.0 1223.2,423.5 1223.2,425.0 1218.8,422.5" fill="#222" stroke="#222" stroke-width="0.6" /><polygon points="1223.2,423.5 1226.2,421.8 1226.2,423.3 1223.2,425.0" fill="#222" stroke="#222" stroke-width="0.6" /><polygon points="1218.8,421.0 1221.8,419.3 1226.2,421.8 1223.2,423.5" fill="#444" stroke="#222" stroke-width="0.6" /><polygon points="1224.3,417.8 1228.7,420.3 1228.7,421.8 1224.3,419.3" fill="#222" stroke="#222" stroke-width="0.6" /><polygon points="1228.7,420.3 1231.7,418.6 1231.7,420.1 1228.7,421.8" fill="#222" stroke="#222" stroke-width="0.6" /><polygon points="1224.3,417.8 1227.3,416.1 1231.7,418.6 1228.7,420.3" fill="#444" stroke="#222" stroke-width="0.6" /><polygon points="1229.8,414.6 1234.2,417.1 1234.2,418.6 1229.8,416.1" fill="#222" stroke="#222" stroke-width="0.6" /><polygon points="1234.2,417.1 1237.2,415.4 1237.2,416.9 1234.2,418.6" fill="#222" stroke="#222" stroke-width="0.6" /><polygon points="1229.8,414.6 1232.8,412.9 1237.2,415.4 1234.2,417.1" fill="#444" stroke="#222" stroke-width="0.6" /><polygon points="728.7,642.9 738.7,651.5 738.7,659.5 728.7,650.9" fill="#4a4a4a" stroke="#2a2a2a" stroke-width="0.7" /><polygon points="738.7,651.5 773.0,632.9 773.0,640.9 738.7,659.5" fill="#555" stroke="#2a2a2a" stroke-width="0.7" /><polygon points="728.7,642.9 763.0,625.8 773.0,632.9 738.7,651.5" fill="#6a6a6a" stroke="#2a2a2a" stroke-width="0.7" /><polygon points="765.9,665.8 774.5,674.4 774.5,682.4 765.9,673.8" fill="#4a4a4a" stroke="#2a2a2a" stroke-width="0.7" /><polygon points="774.5,674.4 808.8,657.2 808.8,665.2 774.5,682.4" fill="#555" stroke="#2a2a2a" stroke-width="0.7" /><polygon points="765.9,665.8 800.2,648.7 808.8,657.2 774.5,674.4" fill="#6a6a6a" stroke="#2a2a2a" stroke-width="0.7" /><polygon points="801.6,687.3 808.8,694.4 808.8,702.4 801.6,695.3" fill="#4a4a4a" stroke="#2a2a2a" stroke-width="0.7" /><polygon points="808.8,694.4 844.5,675.8 844.5,683.8 808.8,702.4" fill="#555" stroke="#2a2a2a" stroke-width="0.7" /><polygon points="801.6,687.3 835.9,668.7 844.5,675.8 808.8,694.4" fill="#6a6a6a" stroke="#2a2a2a" stroke-width="0.7" /><polygon points="837.4,708.7 845.9,715.9 845.9,723.9 837.4,716.7" fill="#4a4a4a" stroke="#2a2a2a" stroke-width="0.7" /><polygon points="845.9,715.9 880.2,697.3 880.2,705.3 845.9,723.9" fill="#555" stroke="#2a2a2a" stroke-width="0.7" /><polygon points="837.4,708.7 871.7,690.1 880.2,697.3 845.9,715.9" fill="#6a6a6a" stroke="#2a2a2a" stroke-width="0.7" /><polygon points="700.1,665.8 718.7,675.8 718.7,678.8 700.1,668.8" fill="#3a3a3a" stroke="#2a2a2a" stroke-width="0.7" /><polygon points="718.7,675.8 735.8,665.8 735.8,668.8 718.7,678.8" fill="#444" stroke="#2a2a2a" stroke-width="0.7" /><polygon points="700.1,665.8 717.3,655.8 735.8,665.8 718.7,675.8" fill="#707070" stroke="#2a2a2a" stroke-width="0.7" /><polygon points="735.8,687.3 755.9,697.3 755.9,700.3 735.8,690.3" fill="#3a3a3a" stroke="#2a2a2a" stroke-width="0.7" /><polygon points="755.9,697.3 773.0,687.3 773.0,690.3 755.9,700.3" fill="#444" stroke="#2a2a2a" stroke-width="0.7" /><polygon points="735.8,687.3 753.0,677.3 773.0,687.3 755.9,697.3" fill="#707070" stroke="#2a2a2a" stroke-width="0.7" /><polygon points="771.6,708.7 790.2,718.7 790.2,721.7 771.6,711.7" fill="#3a3a3a" stroke="#2a2a2a" stroke-width="0.7" /><polygon points="790.2,718.7 808.8,708.7 808.8,711.7 790.2,721.7" fill="#444" stroke="#2a2a2a" stroke-width="0.7" /><polygon points="771.6,708.7 790.2,697.3 808.8,708.7 790.2,718.7" fill="#707070" stroke="#2a2a2a" stroke-width="0.7" /><polygon points="807.3,728.7 825.9,740.2 825.9,743.2 807.3,731.7" fill="#3a3a3a" stroke="#2a2a2a" stroke-width="0.7" /><polygon points="825.9,740.2 844.5,728.7 844.5,731.7 825.9,743.2" fill="#444" stroke="#2a2a2a" stroke-width="0.7" /><polygon points="807.3,728.7 825.9,718.7 844.5,728.7 825.9,740.2" fill="#707070" stroke="#2a2a2a" stroke-width="0.7" /><polygon points="657.2,641.5 674.4,651.5 674.4,654.5 657.2,644.5" fill="#3a3a3a" stroke="#2a2a2a" stroke-width="0.7" /><polygon points="674.4,651.5 691.5,641.5 691.5,644.5 674.4,654.5" fill="#444" stroke="#2a2a2a" stroke-width="0.7" /><polygon points="657.2,641.5 674.4,631.5 691.5,641.5 674.4,651.5" fill="#707070" stroke="#2a2a2a" stroke-width="0.7" /><polygon points="622.9,592.9 637.2,604.3 637.2,607.3 622.9,595.9" fill="#3a3a3a" stroke="#2a2a2a" stroke-width="0.7" /><polygon points="637.2,604.3 652.9,595.8 652.9,598.8 637.2,607.3" fill="#444" stroke="#2a2a2a" stroke-width="0.7" /><polygon points="622.9,592.9 637.2,585.8 652.9,595.8 637.2,604.3" fill="#707070" stroke="#2a2a2a" stroke-width="0.7" /><polygon points="587.1,614.3 607.2,625.8 607.2,628.8 587.1,617.3" fill="#3a3a3a" stroke="#2a2a2a" stroke-width="0.7" /><polygon points="607.2,625.8 625.8,615.8 625.8,618.8 607.2,628.8" fill="#444" stroke="#2a2a2a" stroke-width="0.7" /><polygon points="587.1,614.3 604.3,604.3 625.8,615.8 607.2,625.8" fill="#707070" stroke="#2a2a2a" stroke-width="0.7" /><polygon points="627.2,622.9 640.0,631.5 640.0,634.5 627.2,625.9" fill="#3a3a3a" stroke="#2a2a2a" stroke-width="0.7" /><polygon points="640.0,631.5 651.5,624.4 651.5,627.4 640.0,634.5" fill="#444" stroke="#2a2a2a" stroke-width="0.7" /><polygon points="627.2,622.9 637.2,615.8 651.5,624.4 640.0,631.5" fill="#707070" stroke="#2a2a2a" stroke-width="0.7" /><polygon points="647.2,577.2 670.1,590.0 670.1,597.0 647.2,584.2" fill="#3a3a3a" stroke="#222" stroke-width="0.7" /><polygon points="670.1,590.0 688.7,580.0 688.7,587.0 670.1,597.0" fill="#444" stroke="#222" stroke-width="0.7" /><polygon points="647.2,577.2 665.8,567.2 688.7,580.0 670.1,590.0" fill="#585858" stroke="#222" stroke-width="0.7" /><polygon points="586.0,571.1 598.0,577.4 598.0,580.4 586.0,574.1" fill="#e9e4e2" stroke="#666" stroke-width="0.5" /><polygon points="598.0,577.4 605.0,573.3 605.0,576.3 598.0,580.4" fill="#ffffff" stroke="#666" stroke-width="0.5" /><polygon points="586.0,571.1 593.0,567.1 605.0,573.3 598.0,577.4" fill="#e8b3ab" stroke="#7a6a68" stroke-width="0.5" /><polygon points="605.0,573.3 598.0,577.4 595.6,576.1 602.6,572.0" fill="#f6f6f6" stroke="#777" stroke-width="0.4" /><polygon points="586.0,571.1 593.0,567.1 595.4,568.3 588.4,572.4" fill="#f0f0f0" stroke="#777" stroke-width="0.4" /><polygon points="596.7,577.0 608.7,583.2 608.7,586.2 596.7,580.0" fill="#e9e4e2" stroke="#666" stroke-width="0.5" /><polygon points="608.7,583.2 615.7,579.2 615.7,582.2 608.7,586.2" fill="#ffffff" stroke="#666" stroke-width="0.5" /><polygon points="596.7,577.0 603.7,573.0 615.7,579.2 608.7,583.2" fill="#e8b3ab" stroke="#7a6a68" stroke-width="0.5" /><polygon points="615.7,579.2 608.7,583.2 606.3,582.0 613.3,577.9" fill="#f6f6f6" stroke="#777" stroke-width="0.4" /><polygon points="596.7,577.0 603.7,573.0 606.1,574.2 599.1,578.3" fill="#f0f0f0" stroke="#777" stroke-width="0.4" /><polygon points="608.0,583.6 620.0,589.9 620.0,592.9 608.0,586.6" fill="#e9e4e2" stroke="#666" stroke-width="0.5" /><polygon points="620.0,589.9 627.0,585.8 627.0,588.8 620.0,592.9" fill="#ffffff" stroke="#666" stroke-width="0.5" /><polygon points="608.0,583.6 615.0,579.6 627.0,585.8 620.0,589.9" fill="#e8b3ab" stroke="#7a6a68" stroke-width="0.5" /><polygon points="627.0,585.8 620.0,589.9 617.6,588.6 624.6,584.5" fill="#f6f6f6" stroke="#777" stroke-width="0.4" /><polygon points="608.0,583.6 615.0,579.6 617.4,580.8 610.4,584.9" fill="#f0f0f0" stroke="#777" stroke-width="0.4" /><polygon points="582.4,586.6 594.4,592.9 594.4,595.9 582.4,589.6" fill="#e9e4e2" stroke="#666" stroke-width="0.5" /><polygon points="594.4,592.9 601.4,588.8 601.4,591.8 594.4,595.9" fill="#ffffff" stroke="#666" stroke-width="0.5" /><polygon points="582.4,586.6 589.4,582.6 601.4,588.8 594.4,592.9" fill="#e8b3ab" stroke="#7a6a68" stroke-width="0.5" /><polygon points="601.4,588.8 594.4,592.9 592.0,591.6 599.0,587.5" fill="#f6f6f6" stroke="#777" stroke-width="0.4" /><polygon points="582.4,586.6 589.4,582.6 591.8,583.8 584.8,587.9" fill="#f0f0f0" stroke="#777" stroke-width="0.4" /><polygon points="592.5,592.5 604.5,598.8 604.5,601.8 592.5,595.5" fill="#e9e4e2" stroke="#666" stroke-width="0.5" /><polygon points="604.5,598.8 611.5,594.7 611.5,597.7 604.5,601.8" fill="#ffffff" stroke="#666" stroke-width="0.5" /><polygon points="592.5,592.5 599.5,588.5 611.5,594.7 604.5,598.8" fill="#e8b3ab" stroke="#7a6a68" stroke-width="0.5" /><polygon points="611.5,594.7 604.5,598.8 602.1,597.5 609.1,593.4" fill="#f6f6f6" stroke="#777" stroke-width="0.4" /><polygon points="592.5,592.5 599.5,588.5 601.9,589.7 594.9,593.8" fill="#f0f0f0" stroke="#777" stroke-width="0.4" /><polygon points="614.6,603.3 626.6,609.5 626.6,612.5 614.6,606.3" fill="#e9e4e2" stroke="#666" stroke-width="0.5" /><polygon points="626.6,609.5 633.6,605.5 633.6,608.5 626.6,612.5" fill="#ffffff" stroke="#666" stroke-width="0.5" /><polygon points="614.6,603.3 621.6,599.2 633.6,605.5 626.6,609.5" fill="#e8b3ab" stroke="#7a6a68" stroke-width="0.5" /><polygon points="633.6,605.5 626.6,609.5 624.2,608.3 631.2,604.2" fill="#f6f6f6" stroke="#777" stroke-width="0.4" /><polygon points="614.6,603.3 621.6,599.2 624.0,600.5 617.0,604.6" fill="#f0f0f0" stroke="#777" stroke-width="0.4" /><polygon points="646.8,614.0 658.8,620.2 658.8,623.2 646.8,617.0" fill="#e9e4e2" stroke="#666" stroke-width="0.5" /><polygon points="658.8,620.2 665.8,616.2 665.8,619.2 658.8,623.2" fill="#ffffff" stroke="#666" stroke-width="0.5" /><polygon points="646.8,614.0 653.8,610.0 665.8,616.2 658.8,620.2" fill="#e8b3ab" stroke="#7a6a68" stroke-width="0.5" /><polygon points="665.8,616.2 658.8,620.2 656.4,619.0 663.4,614.9" fill="#f6f6f6" stroke="#777" stroke-width="0.4" /><polygon points="646.8,614.0 653.8,610.0 656.2,611.2 649.2,615.3" fill="#f0f0f0" stroke="#777" stroke-width="0.4" /><polygon points="657.5,607.4 669.5,613.6 669.5,616.6 657.5,610.4" fill="#e9e4e2" stroke="#666" stroke-width="0.5" /><polygon points="669.5,613.6 676.5,609.6 676.5,612.6 669.5,616.6" fill="#ffffff" stroke="#666" stroke-width="0.5" /><polygon points="657.5,607.4 664.5,603.4 676.5,609.6 669.5,613.6" fill="#e8b3ab" stroke="#7a6a68" stroke-width="0.5" /><polygon points="676.5,609.6 669.5,613.6 667.1,612.4 674.1,608.3" fill="#f6f6f6" stroke="#777" stroke-width="0.4" /><polygon points="657.5,607.4 664.5,603.4 666.9,604.6 659.9,608.7" fill="#f0f0f0" stroke="#777" stroke-width="0.4" /><polygon points="669.4,600.9 681.4,607.1 681.4,610.1 669.4,603.9" fill="#e9e4e2" stroke="#666" stroke-width="0.5" /><polygon points="681.4,607.1 688.4,603.1 688.4,606.1 681.4,610.1" fill="#ffffff" stroke="#666" stroke-width="0.5" /><polygon points="669.4,600.9 676.4,596.9 688.4,603.1 681.4,607.1" fill="#e8b3ab" stroke="#7a6a68" stroke-width="0.5" /><polygon points="688.4,603.1 681.4,607.1 679.0,605.9 686.0,601.8" fill="#f6f6f6" stroke="#777" stroke-width="0.4" /><polygon points="669.4,600.9 676.4,596.9 678.8,598.1 671.8,602.2" fill="#f0f0f0" stroke="#777" stroke-width="0.4" /><polygon points="648.0,559.2 660.0,565.4 660.0,568.4 648.0,562.2" fill="#e9e4e2" stroke="#666" stroke-width="0.5" /><polygon points="660.0,565.4 667.0,561.4 667.0,564.4 660.0,568.4" fill="#ffffff" stroke="#666" stroke-width="0.5" /><polygon points="648.0,559.2 655.0,555.1 667.0,561.4 660.0,565.4" fill="#e8b3ab" stroke="#7a6a68" stroke-width="0.5" /><polygon points="667.0,561.4 660.0,565.4 657.6,564.2 664.6,560.1" fill="#f6f6f6" stroke="#777" stroke-width="0.4" /><polygon points="648.0,559.2 655.0,555.1 657.4,556.4 650.4,560.5" fill="#f0f0f0" stroke="#777" stroke-width="0.4" /><polygon points="683.7,574.7 695.7,580.9 695.7,583.9 683.7,577.7" fill="#e9e4e2" stroke="#666" stroke-width="0.5" /><polygon points="695.7,580.9 702.7,576.9 702.7,579.9 695.7,583.9" fill="#ffffff" stroke="#666" stroke-width="0.5" /><polygon points="683.7,574.7 690.7,570.6 702.7,576.9 695.7,580.9" fill="#e8b3ab" stroke="#7a6a68" stroke-width="0.5" /><polygon points="702.7,576.9 695.7,580.9 693.3,579.7 700.3,575.6" fill="#f6f6f6" stroke="#777" stroke-width="0.4" /><polygon points="683.7,574.7 690.7,570.6 693.1,571.9 686.1,576.0" fill="#f0f0f0" stroke="#777" stroke-width="0.4" /><polygon points="685.5,540.9 697.5,547.1 697.5,550.1 685.5,543.9" fill="#e9e4e2" stroke="#666" stroke-width="0.5" /><polygon points="697.5,547.1 704.5,543.1 704.5,546.1 697.5,550.1" fill="#ffffff" stroke="#666" stroke-width="0.5" /><polygon points="685.5,540.9 692.5,536.9 704.5,543.1 697.5,547.1" fill="#e8b3ab" stroke="#7a6a68" stroke-width="0.5" /><polygon points="704.5,543.1 697.5,547.1 695.1,545.9 702.1,541.8" fill="#f6f6f6" stroke="#777" stroke-width="0.4" /><polygon points="685.5,540.9 692.5,536.9 694.9,538.1 687.9,542.2" fill="#f0f0f0" stroke="#777" stroke-width="0.4" /><polygon points="710.5,637.9 722.5,644.1 722.5,647.1 710.5,640.9" fill="#e9e4e2" stroke="#666" stroke-width="0.5" /><polygon points="722.5,644.1 729.5,640.1 729.5,643.1 722.5,647.1" fill="#ffffff" stroke="#666" stroke-width="0.5" /><polygon points="710.5,637.9 717.5,633.9 729.5,640.1 722.5,644.1" fill="#e8b3ab" stroke="#7a6a68" stroke-width="0.5" /><polygon points="729.5,640.1 722.5,644.1 720.1,642.9 727.1,638.8" fill="#f6f6f6" stroke="#777" stroke-width="0.4" /><polygon points="710.5,637.9 717.5,633.9 719.9,635.1 712.9,639.2" fill="#f0f0f0" stroke="#777" stroke-width="0.4" /><polygon points="722.1,631.8 734.1,638.0 734.1,641.0 722.1,634.8" fill="#e9e4e2" stroke="#666" stroke-width="0.5" /><polygon points="734.1,638.0 741.1,634.0 741.1,637.0 734.1,641.0" fill="#ffffff" stroke="#666" stroke-width="0.5" /><polygon points="722.1,631.8 729.1,627.8 741.1,634.0 734.1,638.0" fill="#e8b3ab" stroke="#7a6a68" stroke-width="0.5" /><polygon points="741.1,634.0 734.1,638.0 731.7,636.8 738.7,632.7" fill="#f6f6f6" stroke="#777" stroke-width="0.4" /><polygon points="722.1,631.8 729.1,627.8 731.5,629.0 724.5,633.1" fill="#f0f0f0" stroke="#777" stroke-width="0.4" /><polygon points="717.8,644.9 729.8,651.1 729.8,654.1 717.8,647.9" fill="#e9e4e2" stroke="#666" stroke-width="0.5" /><polygon points="729.8,651.1 736.8,647.1 736.8,650.1 729.8,654.1" fill="#ffffff" stroke="#666" stroke-width="0.5" /><polygon points="717.8,644.9 724.8,640.9 736.8,647.1 729.8,651.1" fill="#e8b3ab" stroke="#7a6a68" stroke-width="0.5" /><polygon points="736.8,647.1 729.8,651.1 727.4,649.9 734.4,645.8" fill="#f6f6f6" stroke="#777" stroke-width="0.4" /><polygon points="717.8,644.9 724.8,640.9 727.2,642.1 720.2,646.2" fill="#f0f0f0" stroke="#777" stroke-width="0.4" /><polygon points="729.2,638.9 741.2,645.1 741.2,648.1 729.2,641.9" fill="#e9e4e2" stroke="#666" stroke-width="0.5" /><polygon points="741.2,645.1 748.2,641.1 748.2,644.1 741.2,648.1" fill="#ffffff" stroke="#666" stroke-width="0.5" /><polygon points="729.2,638.9 736.2,634.9 748.2,641.1 741.2,645.1" fill="#e8b3ab" stroke="#7a6a68" stroke-width="0.5" /><polygon points="748.2,641.1 741.2,645.1 738.8,643.9 745.8,639.8" fill="#f6f6f6" stroke="#777" stroke-width="0.4" /><polygon points="729.2,638.9 736.2,634.9 738.6,636.1 731.6,640.2" fill="#f0f0f0" stroke="#777" stroke-width="0.4" /><polygon points="778.5,628.9 790.5,635.1 790.5,638.1 778.5,631.9" fill="#e9e4e2" stroke="#666" stroke-width="0.5" /><polygon points="790.5,635.1 797.5,631.1 797.5,634.1 790.5,638.1" fill="#ffffff" stroke="#666" stroke-width="0.5" /><polygon points="778.5,628.9 785.5,624.9 797.5,631.1 790.5,635.1" fill="#e8b3ab" stroke="#7a6a68" stroke-width="0.5" /><polygon points="797.5,631.1 790.5,635.1 788.1,633.9 795.1,629.8" fill="#f6f6f6" stroke="#777" stroke-width="0.4" /><polygon points="778.5,628.9 785.5,624.9 787.9,626.1 780.9,630.2" fill="#f0f0f0" stroke="#777" stroke-width="0.4" /><polygon points="790.5,622.9 802.5,629.1 802.5,632.1 790.5,625.9" fill="#e9e4e2" stroke="#666" stroke-width="0.5" /><polygon points="802.5,629.1 809.5,625.1 809.5,628.1 802.5,632.1" fill="#ffffff" stroke="#666" stroke-width="0.5" /><polygon points="790.5,622.9 797.5,618.9 809.5,625.1 802.5,629.1" fill="#e8b3ab" stroke="#7a6a68" stroke-width="0.5" /><polygon points="809.5,625.1 802.5,629.1 800.1,627.9 807.1,623.8" fill="#f6f6f6" stroke="#777" stroke-width="0.4" /><polygon points="790.5,622.9 797.5,618.9 799.9,620.1 792.9,624.2" fill="#f0f0f0" stroke="#777" stroke-width="0.4" /><polygon points="785.5,640.9 797.5,647.1 797.5,650.1 785.5,643.9" fill="#e9e4e2" stroke="#666" stroke-width="0.5" /><polygon points="797.5,647.1 804.5,643.1 804.5,646.1 797.5,650.1" fill="#ffffff" stroke="#666" stroke-width="0.5" /><polygon points="785.5,640.9 792.5,636.9 804.5,643.1 797.5,647.1" fill="#e8b3ab" stroke="#7a6a68" stroke-width="0.5" /><polygon points="804.5,643.1 797.5,647.1 795.1,645.9 802.1,641.8" fill="#f6f6f6" stroke="#777" stroke-width="0.4" /><polygon points="785.5,640.9 792.5,636.9 794.9,638.1 787.9,642.2" fill="#f0f0f0" stroke="#777" stroke-width="0.4" /><polygon points="797.5,634.9 809.5,641.1 809.5,644.1 797.5,637.9" fill="#e9e4e2" stroke="#666" stroke-width="0.5" /><polygon points="809.5,641.1 816.5,637.1 816.5,640.1 809.5,644.1" fill="#ffffff" stroke="#666" stroke-width="0.5" /><polygon points="797.5,634.9 804.5,630.9 816.5,637.1 809.5,641.1" fill="#e8b3ab" stroke="#7a6a68" stroke-width="0.5" /><polygon points="816.5,637.1 809.5,641.1 807.1,639.9 814.1,635.8" fill="#f6f6f6" stroke="#777" stroke-width="0.4" /><polygon points="797.5,634.9 804.5,630.9 806.9,632.1 799.9,636.2" fill="#f0f0f0" stroke="#777" stroke-width="0.4" /><polygon points="809.5,628.9 821.5,635.1 821.5,638.1 809.5,631.9" fill="#e9e4e2" stroke="#666" stroke-width="0.5" /><polygon points="821.5,635.1 828.5,631.1 828.5,634.1 821.5,638.1" fill="#ffffff" stroke="#666" stroke-width="0.5" /><polygon points="809.5,628.9 816.5,624.9 828.5,631.1 821.5,635.1" fill="#e8b3ab" stroke="#7a6a68" stroke-width="0.5" /><polygon points="828.5,631.1 821.5,635.1 819.1,633.9 826.1,629.8" fill="#f6f6f6" stroke="#777" stroke-width="0.4" /><polygon points="809.5,628.9 816.5,624.9 818.9,626.1 811.9,630.2" fill="#f0f0f0" stroke="#777" stroke-width="0.4" /><polygon points="706.5,682.9 718.5,689.1 718.5,692.1 706.5,685.9" fill="#e9e4e2" stroke="#666" stroke-width="0.5" /><polygon points="718.5,689.1 725.5,685.1 725.5,688.1 718.5,692.1" fill="#ffffff" stroke="#666" stroke-width="0.5" /><polygon points="706.5,682.9 713.5,678.9 725.5,685.1 718.5,689.1" fill="#e8b3ab" stroke="#7a6a68" stroke-width="0.5" /><polygon points="725.5,685.1 718.5,689.1 716.1,687.9 723.1,683.8" fill="#f6f6f6" stroke="#777" stroke-width="0.4" /><polygon points="706.5,682.9 713.5,678.9 715.9,680.1 708.9,684.2" fill="#f0f0f0" stroke="#777" stroke-width="0.4" /><polygon points="718.5,676.9 730.5,683.1 730.5,686.1 718.5,679.9" fill="#e9e4e2" stroke="#666" stroke-width="0.5" /><polygon points="730.5,683.1 737.5,679.1 737.5,682.1 730.5,686.1" fill="#ffffff" stroke="#666" stroke-width="0.5" /><polygon points="718.5,676.9 725.5,672.9 737.5,679.1 730.5,683.1" fill="#e8b3ab" stroke="#7a6a68" stroke-width="0.5" /><polygon points="737.5,679.1 730.5,683.1 728.1,681.9 735.1,677.8" fill="#f6f6f6" stroke="#777" stroke-width="0.4" /><polygon points="718.5,676.9 725.5,672.9 727.9,674.1 720.9,678.2" fill="#f0f0f0" stroke="#777" stroke-width="0.4" /><polygon points="712.5,690.9 724.5,697.1 724.5,700.1 712.5,693.9" fill="#e9e4e2" stroke="#666" stroke-width="0.5" /><polygon points="724.5,697.1 731.5,693.1 731.5,696.1 724.5,700.1" fill="#ffffff" stroke="#666" stroke-width="0.5" /><polygon points="712.5,690.9 719.5,686.9 731.5,693.1 724.5,697.1" fill="#e8b3ab" stroke="#7a6a68" stroke-width="0.5" /><polygon points="731.5,693.1 724.5,697.1 722.1,695.9 729.1,691.8" fill="#f6f6f6" stroke="#777" stroke-width="0.4" /><polygon points="712.5,690.9 719.5,686.9 721.9,688.1 714.9,692.2" fill="#f0f0f0" stroke="#777" stroke-width="0.4" /><polygon points="742.5,702.9 754.5,709.1 754.5,712.1 742.5,705.9" fill="#e9e4e2" stroke="#666" stroke-width="0.5" /><polygon points="754.5,709.1 761.5,705.1 761.5,708.1 754.5,712.1" fill="#ffffff" stroke="#666" stroke-width="0.5" /><polygon points="742.5,702.9 749.5,698.9 761.5,705.1 754.5,709.1" fill="#e8b3ab" stroke="#7a6a68" stroke-width="0.5" /><polygon points="761.5,705.1 754.5,709.1 752.1,707.9 759.1,703.8" fill="#f6f6f6" stroke="#777" stroke-width="0.4" /><polygon points="742.5,702.9 749.5,698.9 751.9,700.1 744.9,704.2" fill="#f0f0f0" stroke="#777" stroke-width="0.4" /><polygon points="754.5,696.9 766.5,703.1 766.5,706.1 754.5,699.9" fill="#e9e4e2" stroke="#666" stroke-width="0.5" /><polygon points="766.5,703.1 773.5,699.1 773.5,702.1 766.5,706.1" fill="#ffffff" stroke="#666" stroke-width="0.5" /><polygon points="754.5,696.9 761.5,692.9 773.5,699.1 766.5,703.1" fill="#e8b3ab" stroke="#7a6a68" stroke-width="0.5" /><polygon points="773.5,699.1 766.5,703.1 764.1,701.9 771.1,697.8" fill="#f6f6f6" stroke="#777" stroke-width="0.4" /><polygon points="754.5,696.9 761.5,692.9 763.9,694.1 756.9,698.2" fill="#f0f0f0" stroke="#777" stroke-width="0.4" /><polygon points="748.5,710.9 760.5,717.1 760.5,720.1 748.5,713.9" fill="#e9e4e2" stroke="#666" stroke-width="0.5" /><polygon points="760.5,717.1 767.5,713.1 767.5,716.1 760.5,720.1" fill="#ffffff" stroke="#666" stroke-width="0.5" /><polygon points="748.5,710.9 755.5,706.9 767.5,713.1 760.5,717.1" fill="#e8b3ab" stroke="#7a6a68" stroke-width="0.5" /><polygon points="767.5,713.1 760.5,717.1 758.1,715.9 765.1,711.8" fill="#f6f6f6" stroke="#777" stroke-width="0.4" /><polygon points="748.5,710.9 755.5,706.9 757.9,708.1 750.9,712.2" fill="#f0f0f0" stroke="#777" stroke-width="0.4" /><polygon points="777.5,722.9 789.5,729.1 789.5,732.1 777.5,725.9" fill="#e9e4e2" stroke="#666" stroke-width="0.5" /><polygon points="789.5,729.1 796.5,725.1 796.5,728.1 789.5,732.1" fill="#ffffff" stroke="#666" stroke-width="0.5" /><polygon points="777.5,722.9 784.5,718.9 796.5,725.1 789.5,729.1" fill="#e8b3ab" stroke="#7a6a68" stroke-width="0.5" /><polygon points="796.5,725.1 789.5,729.1 787.1,727.9 794.1,723.8" fill="#f6f6f6" stroke="#777" stroke-width="0.4" /><polygon points="777.5,722.9 784.5,718.9 786.9,720.1 779.9,724.2" fill="#f0f0f0" stroke="#777" stroke-width="0.4" /><polygon points="789.5,716.9 801.5,723.1 801.5,726.1 789.5,719.9" fill="#e9e4e2" stroke="#666" stroke-width="0.5" /><polygon points="801.5,723.1 808.5,719.1 808.5,722.1 801.5,726.1" fill="#ffffff" stroke="#666" stroke-width="0.5" /><polygon points="789.5,716.9 796.5,712.9 808.5,719.1 801.5,723.1" fill="#e8b3ab" stroke="#7a6a68" stroke-width="0.5" /><polygon points="808.5,719.1 801.5,723.1 799.1,721.9 806.1,717.8" fill="#f6f6f6" stroke="#777" stroke-width="0.4" /><polygon points="789.5,716.9 796.5,712.9 798.9,714.1 791.9,718.2" fill="#f0f0f0" stroke="#777" stroke-width="0.4" /><polygon points="783.5,730.9 795.5,737.1 795.5,740.1 783.5,733.9" fill="#e9e4e2" stroke="#666" stroke-width="0.5" /><polygon points="795.5,737.1 802.5,733.1 802.5,736.1 795.5,740.1" fill="#ffffff" stroke="#666" stroke-width="0.5" /><polygon points="783.5,730.9 790.5,726.9 802.5,733.1 795.5,737.1" fill="#e8b3ab" stroke="#7a6a68" stroke-width="0.5" /><polygon points="802.5,733.1 795.5,737.1 793.1,735.9 800.1,731.8" fill="#f6f6f6" stroke="#777" stroke-width="0.4" /><polygon points="783.5,730.9 790.5,726.9 792.9,728.1 785.9,732.2" fill="#f0f0f0" stroke="#777" stroke-width="0.4" /><polygon points="852.5,670.9 864.5,677.1 864.5,680.1 852.5,673.9" fill="#e9e4e2" stroke="#666" stroke-width="0.5" /><polygon points="864.5,677.1 871.5,673.1 871.5,676.1 864.5,680.1" fill="#ffffff" stroke="#666" stroke-width="0.5" /><polygon points="852.5,670.9 859.5,666.9 871.5,673.1 864.5,677.1" fill="#e8b3ab" stroke="#7a6a68" stroke-width="0.5" /><polygon points="871.5,673.1 864.5,677.1 862.1,675.9 869.1,671.8" fill="#f6f6f6" stroke="#777" stroke-width="0.4" /><polygon points="852.5,670.9 859.5,666.9 861.9,668.1 854.9,672.2" fill="#f0f0f0" stroke="#777" stroke-width="0.4" /><polygon points="864.5,664.9 876.5,671.1 876.5,674.1 864.5,667.9" fill="#e9e4e2" stroke="#666" stroke-width="0.5" /><polygon points="876.5,671.1 883.5,667.1 883.5,670.1 876.5,674.1" fill="#ffffff" stroke="#666" stroke-width="0.5" /><polygon points="864.5,664.9 871.5,660.9 883.5,667.1 876.5,671.1" fill="#e8b3ab" stroke="#7a6a68" stroke-width="0.5" /><polygon points="883.5,667.1 876.5,671.1 874.1,669.9 881.1,665.8" fill="#f6f6f6" stroke="#777" stroke-width="0.4" /><polygon points="864.5,664.9 871.5,660.9 873.9,662.1 866.9,666.2" fill="#f0f0f0" stroke="#777" stroke-width="0.4" /><polygon points="858.5,678.9 870.5,685.1 870.5,688.1 858.5,681.9" fill="#e9e4e2" stroke="#666" stroke-width="0.5" /><polygon points="870.5,685.1 877.5,681.1 877.5,684.1 870.5,688.1" fill="#ffffff" stroke="#666" stroke-width="0.5" /><polygon points="858.5,678.9 865.5,674.9 877.5,681.1 870.5,685.1" fill="#e8b3ab" stroke="#7a6a68" stroke-width="0.5" /><polygon points="877.5,681.1 870.5,685.1 868.1,683.9 875.1,679.8" fill="#f6f6f6" stroke="#777" stroke-width="0.4" /><polygon points="858.5,678.9 865.5,674.9 867.9,676.1 860.9,680.2" fill="#f0f0f0" stroke="#777" stroke-width="0.4" /><polygon points="870.5,672.9 882.5,679.1 882.5,682.1 870.5,675.9" fill="#e9e4e2" stroke="#666" stroke-width="0.5" /><polygon points="882.5,679.1 889.5,675.1 889.5,678.1 882.5,682.1" fill="#ffffff" stroke="#666" stroke-width="0.5" /><polygon points="870.5,672.9 877.5,668.9 889.5,675.1 882.5,679.1" fill="#e8b3ab" stroke="#7a6a68" stroke-width="0.5" /><polygon points="889.5,675.1 882.5,679.1 880.1,677.9 887.1,673.8" fill="#f6f6f6" stroke="#777" stroke-width="0.4" /><polygon points="870.5,672.9 877.5,668.9 879.9,670.1 872.9,674.2" fill="#f0f0f0" stroke="#777" stroke-width="0.4" /><polygon points="876.5,686.9 888.5,693.1 888.5,696.1 876.5,689.9" fill="#e9e4e2" stroke="#666" stroke-width="0.5" /><polygon points="888.5,693.1 895.5,689.1 895.5,692.1 888.5,696.1" fill="#ffffff" stroke="#666" stroke-width="0.5" /><polygon points="876.5,686.9 883.5,682.9 895.5,689.1 888.5,693.1" fill="#e8b3ab" stroke="#7a6a68" stroke-width="0.5" /><polygon points="895.5,689.1 888.5,693.1 886.1,691.9 893.1,687.8" fill="#f6f6f6" stroke="#777" stroke-width="0.4" /><polygon points="876.5,686.9 883.5,682.9 885.9,684.1 878.9,688.2" fill="#f0f0f0" stroke="#777" stroke-width="0.4" /><polygon points="860.5,477.9 872.5,484.1 872.5,487.1 860.5,480.9" fill="#e9e4e2" stroke="#666" stroke-width="0.5" /><polygon points="872.5,484.1 879.5,480.1 879.5,483.1 872.5,487.1" fill="#ffffff" stroke="#666" stroke-width="0.5" /><polygon points="860.5,477.9 867.5,473.9 879.5,480.1 872.5,484.1" fill="#e8b3ab" stroke="#7a6a68" stroke-width="0.5" /><polygon points="879.5,480.1 872.5,484.1 870.1,482.9 877.1,478.8" fill="#f6f6f6" stroke="#777" stroke-width="0.4" /><polygon points="860.5,477.9 867.5,473.9 869.9,475.1 862.9,479.2" fill="#f0f0f0" stroke="#777" stroke-width="0.4" /><polygon points="1156.5,514.9 1168.5,521.1 1168.5,524.1 1156.5,517.9" fill="#e9e4e2" stroke="#666" stroke-width="0.5" /><polygon points="1168.5,521.1 1175.5,517.1 1175.5,520.1 1168.5,524.1" fill="#ffffff" stroke="#666" stroke-width="0.5" /><polygon points="1156.5,514.9 1163.5,510.9 1175.5,517.1 1168.5,521.1" fill="#e8b3ab" stroke="#7a6a68" stroke-width="0.5" /><polygon points="1175.5,517.1 1168.5,521.1 1166.1,519.9 1173.1,515.8" fill="#f6f6f6" stroke="#777" stroke-width="0.4" /><polygon points="1156.5,514.9 1163.5,510.9 1165.9,512.1 1158.9,516.2" fill="#f0f0f0" stroke="#777" stroke-width="0.4" /><polygon points="958.2,291.3 966.6,295.7 966.6,298.7 958.2,294.3" fill="#e9e4e2" stroke="#666" stroke-width="0.5" /><polygon points="966.6,295.7 971.8,292.7 971.8,295.7 966.6,298.7" fill="#ffffff" stroke="#666" stroke-width="0.5" /><polygon points="958.2,291.3 963.4,288.3 971.8,292.7 966.6,295.7" fill="#e8b3ab" stroke="#7a6a68" stroke-width="0.5" /><polygon points="971.8,292.7 966.6,295.7 964.9,294.8 970.1,291.8" fill="#f6f6f6" stroke="#777" stroke-width="0.4" /><polygon points="958.2,291.3 963.4,288.3 965.1,289.2 959.9,292.2" fill="#f0f0f0" stroke="#777" stroke-width="0.4" /><polygon points="968.2,285.3 976.6,289.7 976.6,292.7 968.2,288.3" fill="#e9e4e2" stroke="#666" stroke-width="0.5" /><polygon points="976.6,289.7 981.8,286.7 981.8,289.7 976.6,292.7" fill="#ffffff" stroke="#666" stroke-width="0.5" /><polygon points="968.2,285.3 973.4,282.3 981.8,286.7 976.6,289.7" fill="#e8b3ab" stroke="#7a6a68" stroke-width="0.5" /><polygon points="981.8,286.7 976.6,289.7 974.9,288.8 980.1,285.8" fill="#f6f6f6" stroke="#777" stroke-width="0.4" /><polygon points="968.2,285.3 973.4,282.3 975.1,283.2 969.9,286.2" fill="#f0f0f0" stroke="#777" stroke-width="0.4" /><polygon points="977.2,280.3 985.6,284.7 985.6,287.7 977.2,283.3" fill="#e9e4e2" stroke="#666" stroke-width="0.5" /><polygon points="985.6,284.7 990.8,281.7 990.8,284.7 985.6,287.7" fill="#ffffff" stroke="#666" stroke-width="0.5" /><polygon points="977.2,280.3 982.4,277.3 990.8,281.7 985.6,284.7" fill="#e8b3ab" stroke="#7a6a68" stroke-width="0.5" /><polygon points="990.8,281.7 985.6,284.7 983.9,283.8 989.1,280.8" fill="#f6f6f6" stroke="#777" stroke-width="0.4" /><polygon points="977.2,280.3 982.4,277.3 984.1,278.2 978.9,281.2" fill="#f0f0f0" stroke="#777" stroke-width="0.4" /><polygon points="977.2,315.3 985.6,319.7 985.6,322.7 977.2,318.3" fill="#e9e4e2" stroke="#666" stroke-width="0.5" /><polygon points="985.6,319.7 990.8,316.7 990.8,319.7 985.6,322.7" fill="#ffffff" stroke="#666" stroke-width="0.5" /><polygon points="977.2,315.3 982.4,312.3 990.8,316.7 985.6,319.7" fill="#e8b3ab" stroke="#7a6a68" stroke-width="0.5" /><polygon points="990.8,316.7 985.6,319.7 983.9,318.8 989.1,315.8" fill="#f6f6f6" stroke="#777" stroke-width="0.4" /><polygon points="977.2,315.3 982.4,312.3 984.1,313.2 978.9,316.2" fill="#f0f0f0" stroke="#777" stroke-width="0.4" /><polygon points="988.2,321.3 996.6,325.7 996.6,328.7 988.2,324.3" fill="#e9e4e2" stroke="#666" stroke-width="0.5" /><polygon points="996.6,325.7 1001.8,322.7 1001.8,325.7 996.6,328.7" fill="#ffffff" stroke="#666" stroke-width="0.5" /><polygon points="988.2,321.3 993.4,318.3 1001.8,322.7 996.6,325.7" fill="#e8b3ab" stroke="#7a6a68" stroke-width="0.5" /><polygon points="1001.8,322.7 996.6,325.7 994.9,324.8 1000.1,321.8" fill="#f6f6f6" stroke="#777" stroke-width="0.4" /><polygon points="988.2,321.3 993.4,318.3 995.1,319.2 989.9,322.2" fill="#f0f0f0" stroke="#777" stroke-width="0.4" /><polygon points="1023.2,266.3 1031.6,270.7 1031.6,273.7 1023.2,269.3" fill="#e9e4e2" stroke="#666" stroke-width="0.5" /><polygon points="1031.6,270.7 1036.8,267.7 1036.8,270.7 1031.6,273.7" fill="#ffffff" stroke="#666" stroke-width="0.5" /><polygon points="1023.2,266.3 1028.4,263.3 1036.8,267.7 1031.6,270.7" fill="#e8b3ab" stroke="#7a6a68" stroke-width="0.5" /><polygon points="1036.8,267.7 1031.6,270.7 1029.9,269.8 1035.1,266.8" fill="#f6f6f6" stroke="#777" stroke-width="0.4" /><polygon points="1023.2,266.3 1028.4,263.3 1030.1,264.2 1024.9,267.2" fill="#f0f0f0" stroke="#777" stroke-width="0.4" /><polygon points="1055.2,264.3 1063.6,268.7 1063.6,271.7 1055.2,267.3" fill="#e9e4e2" stroke="#666" stroke-width="0.5" /><polygon points="1063.6,268.7 1068.8,265.7 1068.8,268.7 1063.6,271.7" fill="#ffffff" stroke="#666" stroke-width="0.5" /><polygon points="1055.2,264.3 1060.4,261.3 1068.8,265.7 1063.6,268.7" fill="#e8b3ab" stroke="#7a6a68" stroke-width="0.5" /><polygon points="1068.8,265.7 1063.6,268.7 1061.9,267.8 1067.1,264.8" fill="#f6f6f6" stroke="#777" stroke-width="0.4" /><polygon points="1055.2,264.3 1060.4,261.3 1062.1,262.2 1056.9,265.2" fill="#f0f0f0" stroke="#777" stroke-width="0.4" /><polygon points="1029.2,287.3 1037.6,291.7 1037.6,294.7 1029.2,290.3" fill="#e9e4e2" stroke="#666" stroke-width="0.5" /><polygon points="1037.6,291.7 1042.8,288.7 1042.8,291.7 1037.6,294.7" fill="#ffffff" stroke="#666" stroke-width="0.5" /><polygon points="1029.2,287.3 1034.4,284.3 1042.8,288.7 1037.6,291.7" fill="#e8b3ab" stroke="#7a6a68" stroke-width="0.5" /><polygon points="1042.8,288.7 1037.6,291.7 1035.9,290.8 1041.1,287.8" fill="#f6f6f6" stroke="#777" stroke-width="0.4" /><polygon points="1029.2,287.3 1034.4,284.3 1036.1,285.2 1030.9,288.2" fill="#f0f0f0" stroke="#777" stroke-width="0.4" /><polygon points="1039.2,292.3 1047.6,296.7 1047.6,299.7 1039.2,295.3" fill="#e9e4e2" stroke="#666" stroke-width="0.5" /><polygon points="1047.6,296.7 1052.8,293.7 1052.8,296.7 1047.6,299.7" fill="#ffffff" stroke="#666" stroke-width="0.5" /><polygon points="1039.2,292.3 1044.4,289.3 1052.8,293.7 1047.6,296.7" fill="#e8b3ab" stroke="#7a6a68" stroke-width="0.5" /><polygon points="1052.8,293.7 1047.6,296.7 1045.9,295.8 1051.1,292.8" fill="#f6f6f6" stroke="#777" stroke-width="0.4" /><polygon points="1039.2,292.3 1044.4,289.3 1046.1,290.2 1040.9,293.2" fill="#f0f0f0" stroke="#777" stroke-width="0.4" /><polygon points="1047.2,296.3 1055.6,300.7 1055.6,303.7 1047.2,299.3" fill="#e9e4e2" stroke="#666" stroke-width="0.5" /><polygon points="1055.6,300.7 1060.8,297.7 1060.8,300.7 1055.6,303.7" fill="#ffffff" stroke="#666" stroke-width="0.5" /><polygon points="1047.2,296.3 1052.4,293.3 1060.8,297.7 1055.6,300.7" fill="#e8b3ab" stroke="#7a6a68" stroke-width="0.5" /><polygon points="1060.8,297.7 1055.6,300.7 1053.9,299.8 1059.1,296.8" fill="#f6f6f6" stroke="#777" stroke-width="0.4" /><polygon points="1047.2,296.3 1052.4,293.3 1054.1,294.2 1048.9,297.2" fill="#f0f0f0" stroke="#777" stroke-width="0.4" /><polygon points="1047.2,344.3 1055.6,348.7 1055.6,351.7 1047.2,347.3" fill="#e9e4e2" stroke="#666" stroke-width="0.5" /><polygon points="1055.6,348.7 1060.8,345.7 1060.8,348.7 1055.6,351.7" fill="#ffffff" stroke="#666" stroke-width="0.5" /><polygon points="1047.2,344.3 1052.4,341.3 1060.8,345.7 1055.6,348.7" fill="#e8b3ab" stroke="#7a6a68" stroke-width="0.5" /><polygon points="1060.8,345.7 1055.6,348.7 1053.9,347.8 1059.1,344.8" fill="#f6f6f6" stroke="#777" stroke-width="0.4" /><polygon points="1047.2,344.3 1052.4,341.3 1054.1,342.2 1048.9,345.2" fill="#f0f0f0" stroke="#777" stroke-width="0.4" /><polygon points="1059.2,351.3 1067.6,355.7 1067.6,358.7 1059.2,354.3" fill="#e9e4e2" stroke="#666" stroke-width="0.5" /><polygon points="1067.6,355.7 1072.8,352.7 1072.8,355.7 1067.6,358.7" fill="#ffffff" stroke="#666" stroke-width="0.5" /><polygon points="1059.2,351.3 1064.4,348.3 1072.8,352.7 1067.6,355.7" fill="#e8b3ab" stroke="#7a6a68" stroke-width="0.5" /><polygon points="1072.8,352.7 1067.6,355.7 1065.9,354.8 1071.1,351.8" fill="#f6f6f6" stroke="#777" stroke-width="0.4" /><polygon points="1059.2,351.3 1064.4,348.3 1066.1,349.2 1060.9,352.2" fill="#f0f0f0" stroke="#777" stroke-width="0.4" /><polygon points="1085.2,341.3 1093.6,345.7 1093.6,348.7 1085.2,344.3" fill="#e9e4e2" stroke="#666" stroke-width="0.5" /><polygon points="1093.6,345.7 1098.8,342.7 1098.8,345.7 1093.6,348.7" fill="#ffffff" stroke="#666" stroke-width="0.5" /><polygon points="1085.2,341.3 1090.4,338.3 1098.8,342.7 1093.6,345.7" fill="#e8b3ab" stroke="#7a6a68" stroke-width="0.5" /><polygon points="1098.8,342.7 1093.6,345.7 1091.9,344.8 1097.1,341.8" fill="#f6f6f6" stroke="#777" stroke-width="0.4" /><polygon points="1085.2,341.3 1090.4,338.3 1092.1,339.2 1086.9,342.2" fill="#f0f0f0" stroke="#777" stroke-width="0.4" /><polygon points="1101.2,347.3 1109.6,351.7 1109.6,354.7 1101.2,350.3" fill="#e9e4e2" stroke="#666" stroke-width="0.5" /><polygon points="1109.6,351.7 1114.8,348.7 1114.8,351.7 1109.6,354.7" fill="#ffffff" stroke="#666" stroke-width="0.5" /><polygon points="1101.2,347.3 1106.4,344.3 1114.8,348.7 1109.6,351.7" fill="#e8b3ab" stroke="#7a6a68" stroke-width="0.5" /><polygon points="1114.8,348.7 1109.6,351.7 1107.9,350.8 1113.1,347.8" fill="#f6f6f6" stroke="#777" stroke-width="0.4" /><polygon points="1101.2,347.3 1106.4,344.3 1108.1,345.2 1102.9,348.2" fill="#f0f0f0" stroke="#777" stroke-width="0.4" /><polygon points="1074.0,303.2 1085.0,308.9 1085.0,311.9 1074.0,306.2" fill="#e9e4e2" stroke="#666" stroke-width="0.5" /><polygon points="1085.0,308.9 1092.0,304.8 1092.0,307.8 1085.0,311.9" fill="#ffffff" stroke="#666" stroke-width="0.5" /><polygon points="1074.0,303.2 1081.0,299.1 1092.0,304.8 1085.0,308.9" fill="#e8b3ab" stroke="#7a6a68" stroke-width="0.5" /><polygon points="1092.0,304.8 1085.0,308.9 1082.8,307.7 1089.8,303.7" fill="#f6f6f6" stroke="#777" stroke-width="0.4" /><polygon points="1074.0,303.2 1081.0,299.1 1083.2,300.3 1076.2,304.3" fill="#f0f0f0" stroke="#777" stroke-width="0.4" /><polygon points="1087.0,295.2 1098.0,300.9 1098.0,303.9 1087.0,298.2" fill="#e9e4e2" stroke="#666" stroke-width="0.5" /><polygon points="1098.0,300.9 1105.0,296.8 1105.0,299.8 1098.0,303.9" fill="#ffffff" stroke="#666" stroke-width="0.5" /><polygon points="1087.0,295.2 1094.0,291.1 1105.0,296.8 1098.0,300.9" fill="#e8b3ab" stroke="#7a6a68" stroke-width="0.5" /><polygon points="1105.0,296.8 1098.0,300.9 1095.8,299.7 1102.8,295.7" fill="#f6f6f6" stroke="#777" stroke-width="0.4" /><polygon points="1087.0,295.2 1094.0,291.1 1096.2,292.3 1089.2,296.3" fill="#f0f0f0" stroke="#777" stroke-width="0.4" /><polygon points="1128.0,329.2 1139.0,334.9 1139.0,337.9 1128.0,332.2" fill="#e9e4e2" stroke="#666" stroke-width="0.5" /><polygon points="1139.0,334.9 1146.0,330.8 1146.0,333.8 1139.0,337.9" fill="#ffffff" stroke="#666" stroke-width="0.5" /><polygon points="1128.0,329.2 1135.0,325.1 1146.0,330.8 1139.0,334.9" fill="#e8b3ab" stroke="#7a6a68" stroke-width="0.5" /><polygon points="1146.0,330.8 1139.0,334.9 1136.8,333.7 1143.8,329.7" fill="#f6f6f6" stroke="#777" stroke-width="0.4" /><polygon points="1128.0,329.2 1135.0,325.1 1137.2,326.3 1130.2,330.3" fill="#f0f0f0" stroke="#777" stroke-width="0.4" /><polygon points="1143.0,320.2 1154.0,325.9 1154.0,328.9 1143.0,323.2" fill="#e9e4e2" stroke="#666" stroke-width="0.5" /><polygon points="1154.0,325.9 1161.0,321.8 1161.0,324.8 1154.0,328.9" fill="#ffffff" stroke="#666" stroke-width="0.5" /><polygon points="1143.0,320.2 1150.0,316.1 1161.0,321.8 1154.0,325.9" fill="#e8b3ab" stroke="#7a6a68" stroke-width="0.5" /><polygon points="1161.0,321.8 1154.0,325.9 1151.8,324.7 1158.8,320.7" fill="#f6f6f6" stroke="#777" stroke-width="0.4" /><polygon points="1143.0,320.2 1150.0,316.1 1152.2,317.3 1145.2,321.3" fill="#f0f0f0" stroke="#777" stroke-width="0.4" /><polygon points="684.5,674.7 690.5,678.2 690.5,681.2 684.5,677.7" fill="#ccc" stroke="#666" stroke-width="0.6" /><polygon points="690.5,678.2 695.5,675.3 695.5,678.3 690.5,681.2" fill="#ccc" stroke="#666" stroke-width="0.6" /><polygon points="684.5,674.7 689.5,671.8 695.5,675.3 690.5,678.2" fill="#f0f0f0" stroke="#666" stroke-width="0.6" /><polygon points="738.5,693.7 744.5,697.2 744.5,700.2 738.5,696.7" fill="#ccc" stroke="#666" stroke-width="0.6" /><polygon points="744.5,697.2 749.5,694.3 749.5,697.3 744.5,700.2" fill="#ccc" stroke="#666" stroke-width="0.6" /><polygon points="738.5,693.7 743.5,690.8 749.5,694.3 744.5,697.2" fill="#f0f0f0" stroke="#666" stroke-width="0.6" /><polygon points="774.5,713.7 780.5,717.2 780.5,720.2 774.5,716.7" fill="#ccc" stroke="#666" stroke-width="0.6" /><polygon points="780.5,717.2 785.5,714.3 785.5,717.3 780.5,720.2" fill="#ccc" stroke="#666" stroke-width="0.6" /><polygon points="774.5,713.7 779.5,710.8 785.5,714.3 780.5,717.2" fill="#f0f0f0" stroke="#666" stroke-width="0.6" /><polygon points="807.5,733.7 813.5,737.2 813.5,740.2 807.5,736.7" fill="#ccc" stroke="#666" stroke-width="0.6" /><polygon points="813.5,737.2 818.5,734.3 818.5,737.3 813.5,740.2" fill="#ccc" stroke="#666" stroke-width="0.6" /><polygon points="807.5,733.7 812.5,730.8 818.5,734.3 813.5,737.2" fill="#f0f0f0" stroke="#666" stroke-width="0.6" /><polygon points="1035.5,330.1 1043.5,334.7 1043.5,337.2 1035.5,332.6" fill="#222" stroke="#1a1a1a" stroke-width="0.6" /><polygon points="1043.5,334.7 1048.5,331.9 1048.5,334.4 1043.5,337.2" fill="#222" stroke="#1a1a1a" stroke-width="0.6" /><polygon points="1035.5,330.1 1040.5,327.3 1048.5,331.9 1043.5,334.7" fill="#3c3c3c" stroke="#1a1a1a" stroke-width="0.6" /><polygon points="1044.5,334.1 1052.5,338.7 1052.5,341.2 1044.5,336.6" fill="#222" stroke="#1a1a1a" stroke-width="0.6" /><polygon points="1052.5,338.7 1057.5,335.9 1057.5,338.4 1052.5,341.2" fill="#222" stroke="#1a1a1a" stroke-width="0.6" /><polygon points="1044.5,334.1 1049.5,331.3 1057.5,335.9 1052.5,338.7" fill="#3c3c3c" stroke="#1a1a1a" stroke-width="0.6" /><polygon points="1056.5,317.1 1064.5,321.7 1064.5,324.2 1056.5,319.6" fill="#222" stroke="#1a1a1a" stroke-width="0.6" /><polygon points="1064.5,321.7 1069.5,318.9 1069.5,321.4 1064.5,324.2" fill="#222" stroke="#1a1a1a" stroke-width="0.6" /><polygon points="1056.5,317.1 1061.5,314.3 1069.5,318.9 1064.5,321.7" fill="#3c3c3c" stroke="#1a1a1a" stroke-width="0.6" /><polygon points="1085.5,318.1 1093.5,322.7 1093.5,325.2 1085.5,320.6" fill="#222" stroke="#1a1a1a" stroke-width="0.6" /><polygon points="1093.5,322.7 1098.5,319.9 1098.5,322.4 1093.5,325.2" fill="#222" stroke="#1a1a1a" stroke-width="0.6" /><polygon points="1085.5,318.1 1090.5,315.3 1098.5,319.9 1093.5,322.7" fill="#3c3c3c" stroke="#1a1a1a" stroke-width="0.6" /><polygon points="1032.5,310.1 1040.5,314.7 1040.5,317.2 1032.5,312.6" fill="#222" stroke="#1a1a1a" stroke-width="0.6" /><polygon points="1040.5,314.7 1045.5,311.9 1045.5,314.4 1040.5,317.2" fill="#222" stroke="#1a1a1a" stroke-width="0.6" /><polygon points="1032.5,310.1 1037.5,307.3 1045.5,311.9 1040.5,314.7" fill="#3c3c3c" stroke="#1a1a1a" stroke-width="0.6" /><polygon points="1064.5,275.1 1072.5,279.7 1072.5,282.2 1064.5,277.6" fill="#222" stroke="#1a1a1a" stroke-width="0.6" /><polygon points="1072.5,279.7 1077.5,276.9 1077.5,279.4 1072.5,282.2" fill="#222" stroke="#1a1a1a" stroke-width="0.6" /><polygon points="1064.5,275.1 1069.5,272.3 1077.5,276.9 1072.5,279.7" fill="#3c3c3c" stroke="#1a1a1a" stroke-width="0.6" /><polygon points="998.5,272.1 1006.5,276.7 1006.5,279.2 998.5,274.6" fill="#222" stroke="#1a1a1a" stroke-width="0.6" /><polygon points="1006.5,276.7 1011.5,273.9 1011.5,276.4 1006.5,279.2" fill="#222" stroke="#1a1a1a" stroke-width="0.6" /><polygon points="998.5,272.1 1003.5,269.3 1011.5,273.9 1006.5,276.7" fill="#3c3c3c" stroke="#1a1a1a" stroke-width="0.6" /><polygon points="846.5,376.1 854.5,380.7 854.5,383.2 846.5,378.6" fill="#222" stroke="#1a1a1a" stroke-width="0.6" /><polygon points="854.5,380.7 859.5,377.9 859.5,380.4 854.5,383.2" fill="#222" stroke="#1a1a1a" stroke-width="0.6" /><polygon points="846.5,376.1 851.5,373.3 859.5,377.9 854.5,380.7" fill="#3c3c3c" stroke="#1a1a1a" stroke-width="0.6" /><polygon points="869.5,505.1 877.5,509.7 877.5,512.2 869.5,507.6" fill="#222" stroke="#1a1a1a" stroke-width="0.6" /><polygon points="877.5,509.7 882.5,506.9 882.5,509.4 877.5,512.2" fill="#222" stroke="#1a1a1a" stroke-width="0.6" /><polygon points="869.5,505.1 874.5,502.3 882.5,506.9 877.5,509.7" fill="#3c3c3c" stroke="#1a1a1a" stroke-width="0.6" /><polygon points="904.5,481.1 912.5,485.7 912.5,488.2 904.5,483.6" fill="#222" stroke="#1a1a1a" stroke-width="0.6" /><polygon points="912.5,485.7 917.5,482.9 917.5,485.4 912.5,488.2" fill="#222" stroke="#1a1a1a" stroke-width="0.6" /><polygon points="904.5,481.1 909.5,478.3 917.5,482.9 912.5,485.7" fill="#3c3c3c" stroke="#1a1a1a" stroke-width="0.6" /><polygon points="1311.5,372.1 1319.5,376.7 1319.5,379.2 1311.5,374.6" fill="#222" stroke="#1a1a1a" stroke-width="0.6" /><polygon points="1319.5,376.7 1324.5,373.9 1324.5,376.4 1319.5,379.2" fill="#222" stroke="#1a1a1a" stroke-width="0.6" /><polygon points="1311.5,372.1 1316.5,369.3 1324.5,373.9 1319.5,376.7" fill="#3c3c3c" stroke="#1a1a1a" stroke-width="0.6" /><polygon points="1042.5,279.1 1050.5,283.7 1050.5,286.2 1042.5,281.6" fill="#222" stroke="#1a1a1a" stroke-width="0.6" /><polygon points="1050.5,283.7 1055.5,280.9 1055.5,283.4 1050.5,286.2" fill="#222" stroke="#1a1a1a" stroke-width="0.6" /><polygon points="1042.5,279.1 1047.5,276.3 1055.5,280.9 1050.5,283.7" fill="#3c3c3c" stroke="#1a1a1a" stroke-width="0.6" /><polygon points="875.4,489.0 891.0,498.0 891.0,502.0 875.4,493.0" fill="#3a3a3a" stroke="#222" stroke-width="0.7" /><polygon points="891.0,498.0 908.7,488.0 908.7,492.0 891.0,502.0" fill="#444" stroke="#222" stroke-width="0.7" /><polygon points="875.4,489.0 893.0,479.0 908.7,488.0 891.0,498.0" fill="#666" stroke="#222" stroke-width="0.7" /><path d="M878.0 494.0 L876.0 499.0" fill="none" stroke="#888" stroke-width="1" /><path d="M882.5 496.6 L880.5 501.6" fill="none" stroke="#888" stroke-width="1" /><path d="M887.0 499.2 L885.0 504.2" fill="none" stroke="#888" stroke-width="1" /><path d="M891.5 501.8 L889.5 506.8" fill="none" stroke="#888" stroke-width="1" /><path d="M806.0 529 L808.0 533" fill="none" stroke="#aaa" stroke-width="1" /><path d="M809.6 527 L811.6 531" fill="none" stroke="#aaa" stroke-width="1" /><path d="M813.2 525 L815.2 529" fill="none" stroke="#aaa" stroke-width="1" /><path d="M816.8 523 L818.8 527" fill="none" stroke="#aaa" stroke-width="1" /><path d="M820.4 521 L822.4 525" fill="none" stroke="#aaa" stroke-width="1" /><path d="M824.0 519 L826.0 523" fill="none" stroke="#aaa" stroke-width="1" /><path d="M827.6 517 L829.6 521" fill="none" stroke="#aaa" stroke-width="1" /><polygon points="1141.0,539.0 1160.0,548.0 1160.0,551.0 1141.0,542.0" fill="#333" stroke="#222" stroke-width="0.7" /><polygon points="1160.0,548.0 1176.0,538.0 1176.0,541.0 1160.0,551.0" fill="#3a3a3a" stroke="#222" stroke-width="0.7" /><polygon points="1141.0,539.0 1158.0,528.0 1176.0,538.0 1160.0,548.0" fill="#6a6a6a" stroke="#222" stroke-width="0.7" /><path d="M1143 542.0 L1142 547.0" fill="none" stroke="#333" stroke-width="0.9" /><path d="M1146 543.7 L1145 548.7" fill="none" stroke="#333" stroke-width="0.9" /><path d="M1149 545.4 L1148 550.4" fill="none" stroke="#333" stroke-width="0.9" /><path d="M1152 547.1 L1151 552.1" fill="none" stroke="#333" stroke-width="0.9" /><path d="M1155 548.8 L1154 553.8" fill="none" stroke="#333" stroke-width="0.9" /><path d="M1158 550.5 L1157 555.5" fill="none" stroke="#333" stroke-width="0.9" /><polygon points="1127.0,547.9 1136.0,553.0 1136.0,555.5 1127.0,550.4" fill="#333" stroke="#222" stroke-width="0.6" /><polygon points="1136.0,553.0 1141.0,550.1 1141.0,552.6 1136.0,555.5" fill="#333" stroke="#222" stroke-width="0.6" /><polygon points="1127.0,547.9 1132.0,545.0 1141.0,550.1 1136.0,553.0" fill="#555" stroke="#222" stroke-width="0.6" /><polygon points="1181.0,529.4 1187.0,532.9 1187.0,534.9 1181.0,531.4" fill="#222" stroke="#1a1a1a" stroke-width="0.6" /><polygon points="1187.0,532.9 1191.0,530.6 1191.0,532.6 1187.0,534.9" fill="#222" stroke="#1a1a1a" stroke-width="0.6" /><polygon points="1181.0,529.4 1185.0,527.1 1191.0,530.6 1187.0,532.9" fill="#3c3c3c" stroke="#1a1a1a" stroke-width="0.6" /><polygon points="1121.0,512.0 1138.0,503.0 1140.0,505.0 1123.0,514.0" fill="#222" stroke="none" stroke-width="0.8" /><path d="M463.2 707.6 L440 720.1 L440 747 L463.2 760.1 L485.7 747 L485.7 719.4 Z M440 720.1 L463.2 733.2 L485.7 719.4 M463.2 733.2 L463.2 760.1" fill="none" stroke="#c8c8c8" stroke-width="0.9"/><path d="M463.2 720 L463.2 692" stroke="#0a2a9a" stroke-width="3"/><path d="M458.8 694 L463.2 686 L467.6 694 Z" fill="#0a2a9a"/><path d="M485.7 719.4 L498 712.5" stroke="#3a9a3a" stroke-width="3"/><path d="M495 708 L504 709.5 L499 716.5 Z" fill="#3a9a3a"/><path d="M474.4 740 L496 751.5" stroke="#d03a2a" stroke-width="3"/><path d="M492.5 755.5 L503.5 756 L498 747 Z" fill="#d03a2a"/><text x="459.5" y="684" font-family="Liberation Sans" font-size="8" fill="#6a6ad0">Z</text><text x="505" y="711" font-family="Liberation Sans" font-size="8" fill="#777">Y</text><text x="505" y="763" font-family="Liberation Sans" font-size="8" fill="#b06060">X</text></svg>
<div class="b" style="left:0px;top:821.5px;width:1499px;height:16px;background:#fcfcfc"></div>
<div class="b" style="left:0px;top:837.3px;width:1499px;height:2px;background:#1a1a1a"></div>
<div class="b" style="left:433px;top:129px;width:238px;height:380px;background:#f0f0f0;box-shadow:0 0 1.5px rgba(0,0,0,0.12)"></div>
<div class="b" style="left:434px;top:129px;width:236px;height:18.2px;background:#085b90"></div>
<svg style="left:439px;top:132px" width="12" height="12"><circle cx="6" cy="6" r="4.6" fill="none" stroke="#e6f2fa" stroke-width="1.6" stroke-dasharray="1.6 1.0"/><circle cx="6" cy="6" r="3.4" fill="none" stroke="#e6f2fa" stroke-width="1.3"/><circle cx="6" cy="6" r="1" fill="#e6f2fa"/></svg>
<div class="t" style="left:456px;top:132.3px;font-size:11px;color:#cfe6f5;font-weight:normal;">Collaboration History</div>
<svg style="left:618px;top:131px" width="48" height="14"><path d="M4 3.2 A4.2 4.2 0 1 0 8.5 3.6" fill="none" stroke="#e6f2fa" stroke-width="1.7"/><path d="M6.5 1 L9.8 3.4 L6.8 6" fill="none" stroke="#e6f2fa" stroke-width="1.3"/><path d="M19 4.5 Q19 1.5 22 1.5 Q25 1.5 25 4.5 Q25 6.5 22.3 7.5 L22.3 9.5" fill="none" stroke="#e6f2fa" stroke-width="1.8"/><circle cx="22.3" cy="12" r="1.1" fill="#e6f2fa"/><path d="M35.5 2 L44 11.5 M44 2 L35.5 11.5" stroke="#f2f8fc" stroke-width="1.8"/></svg>
<div class="t" style="left:441px;top:156.5px;font-size:9.4px;color:#333;font-weight:normal;">Collaboration Directory:</div>
<div class="b" style="left:442.6px;top:170.6px;width:220px;height:17.7px;background:#f5f5f5;border:1.2px solid #a9a9a9"></div>
<div class="t" style="left:448px;top:174.8px;font-size:9.06px;color:#333;font-weight:normal;">C:\3D_Workshop_MCAD_Collab\Share</div>
<div class="b" style="left:441px;top:192px;width:221.5px;height:130px;background:#fdfdfd;border-bottom:1.5px solid #e2e2e2"></div>
<svg style="left:446px;top:198px" width="9" height="6"><path d="M0.5 0.5 L8 0.5 L4.25 5 Z" fill="#1f5f8b"/></svg>
<div class="t" style="left:460px;top:195.8px;font-size:10.07px;color:#3a7ba3;font-weight:normal;">Processed IDX Files:</div>
<div class="b" style="left:448.3px;top:215.4px;width:206.7px;height:77px;background:#fff;border:1px solid #e6e6e6"></div>
<div class="b" style="left:449px;top:215.8px;width:205.5px;height:14.7px;background:#ececec"></div>
<div class="b" style="left:605.9px;top:215.8px;width:1px;height:61px;background:#e0e0e0"></div>
<div class="t" style="left:455px;top:218.5px;font-size:9px;color:#333;font-weight:normal;">Name</div>
<div class="t" style="left:610.8px;top:218.5px;font-size:9px;color:#333;font-weight:normal;">Date</div>
<div class="b" style="left:449px;top:246px;width:205.5px;height:15.5px;background:#f6f6f6"></div>
<div class="b" style="left:449px;top:261.5px;width:205.5px;height:1px;background:#eeeeee"></div>
<div class="b" style="left:449px;top:246px;width:205.5px;height:1px;background:#eeeeee"></div>
<div class="b" style="left:464.8px;top:230.5px;width:190.5px;height:16px;border:1.2px solid #c8c89a;background:#fff"></div>
<div class="b" style="left:454.5px;top:235.5px;width:6px;height:6px;border:0.8px solid #ccc;background:#fff"></div>
<div class="b" style="left:455.8px;top:238.2px;width:3.6px;height:0.9px;background:#555"></div>
<div class="t" style="left:467px;top:234px;font-size:9px;color:#333;font-weight:normal;">baseline.idx</div>
<div class="t" style="left:609.5px;top:234px;font-size:9px;color:#333;font-weight:normal;">Tue Sep &nbsp;8</div>
<div class="b" style="left:469px;top:249px;width:6px;height:6px;border:0.8px solid #ddd"></div>
<div class="t" style="left:470px;top:249.4px;font-size:8px;color:#444;font-weight:normal;">+</div>
<div class="t" style="left:482px;top:249.5px;font-size:9px;color:#333;font-weight:normal;">proposal_00.idx</div>
<div class="t" style="left:609.5px;top:249.5px;font-size:9px;color:#333;font-weight:normal;">Tue Sep &nbsp;8</div>
<div class="t" style="left:470px;top:265px;font-size:8px;color:#444;font-weight:normal;">+</div>
<div class="t" style="left:482px;top:265px;font-size:9px;color:#3535c0;font-weight:normal;">response.idx</div>
<div class="t" style="left:609.5px;top:265px;font-size:9px;color:#3535c0;font-weight:normal;">Tue Sep &nbsp;8</div>
<div class="b" style="left:449px;top:277.5px;width:205.5px;height:14px;background:#f2f2f2"></div>
<div class="b" style="left:463.3px;top:279px;width:80.7px;height:11px;background:#c9c9c9"></div>
<svg style="left:454px;top:280.8px" width="6" height="8"><path d="M4.5 1 L1.5 4 L4.5 7" fill="none" stroke="#333" stroke-width="1.4"/></svg>
<svg style="left:644px;top:280.8px" width="6" height="8"><path d="M1.5 1 L4.5 4 L1.5 7" fill="none" stroke="#333" stroke-width="1.4"/></svg>
<svg style="left:503px;top:262px" width="12" height="16"><path d="M1 1 L1 12 L3.8 9.6 L6 14 L8 13 L5.8 8.8 L9.5 8.6 Z" fill="#fff" stroke="#222" stroke-width="1"/></svg>
<div class="b" style="left:448.4px;top:294.8px;width:67px;height:20.2px;background:#f7f7f7;border:1.3px solid #9a9a9a"></div>
<div class="t" style="left:458.5px;top:300px;font-size:9px;color:#333;font-weight:normal;">Remove All</div>
<div class="b" style="left:441px;top:327px;width:221.5px;height:108.7px;background:#fdfdfd;border-bottom:1.5px solid #e2e2e2"></div>
<svg style="left:446px;top:335px" width="9" height="6"><path d="M0.5 0.5 L8 0.5 L4.25 5 Z" fill="#1f5f8b"/></svg>
<div class="t" style="left:460px;top:332.5px;font-size:10.24px;color:#3a7ba3;font-weight:normal;">Unprocessed IDX Files:</div>
<div class="b" style="left:448.5px;top:352.2px;width:206.7px;height:75.5px;background:#fff;border:1px solid #e6e6e6"></div>
<div class="b" style="left:449px;top:352.6px;width:205.5px;height:15.1px;background:#ececec"></div>
<div class="b" style="left:605.5px;top:352.6px;width:1px;height:62px;background:#e0e0e0"></div>
<div class="t" style="left:455px;top:355.5px;font-size:9px;color:#333;font-weight:normal;">Name</div>
<div class="t" style="left:610.6px;top:355.5px;font-size:9px;color:#333;font-weight:normal;">Comment</div>
<div class="b" style="left:449px;top:383.5px;width:205.5px;height:16px;background:#f6f6f6"></div>
<div class="b" style="left:449px;top:415.4px;width:205.5px;height:12px;background:#f2f2f2"></div>
<div class="b" style="left:463.2px;top:416.4px;width:112px;height:10px;background:#c9c9c9"></div>
<svg style="left:454px;top:418.0px" width="6" height="8"><path d="M4.5 1 L1.5 4 L4.5 7" fill="none" stroke="#333" stroke-width="1.4"/></svg>
<svg style="left:644px;top:418.0px" width="6" height="8"><path d="M1.5 1 L4.5 4 L1.5 7" fill="none" stroke="#333" stroke-width="1.4"/></svg>
<div class="b" style="left:441.2px;top:440.4px;width:50.8px;height:21.3px;background:#f7f7f7;border:1.3px solid #9a9a9a"></div>
<div class="t" style="left:451.5px;top:446.3px;font-size:9px;color:#333;font-weight:normal;">Refresh</div>
<svg style="left:547px;top:467px" width="9" height="5"><path d="M0.5 4.5 L8 4.5 L4.25 0.5 Z" fill="#111"/></svg>
<div class="b" style="left:440px;top:475px;width:224px;height:1.3px;background:#dedede"></div>
<div class="b" style="left:550.4px;top:482px;width:51.7px;height:18.3px;background:#0b5f9a"></div>
<div class="t" style="left:569.5px;top:486.3px;font-size:9.5px;color:#fff;font-weight:normal;">OK</div>
<div class="b" style="left:606px;top:482px;width:51.6px;height:18.3px;background:#f4f4f4;border:1.3px solid #4f86b3"></div>
<div class="t" style="left:617.5px;top:486.3px;font-size:9.5px;color:#2f6a95;font-weight:normal;">Cancel</div>
<svg width="1499" height="839" style="left:0;top:0"><circle cx="721.7" cy="455.7" r="89.5" fill="none" stroke="#000" stroke-width="5.2"/><path d="M697.5 418.5 L697.5 493 L757 457.5 Z" fill="none" stroke="#000" stroke-width="5.5" stroke-linejoin="miter"/></svg>
</body></html>
